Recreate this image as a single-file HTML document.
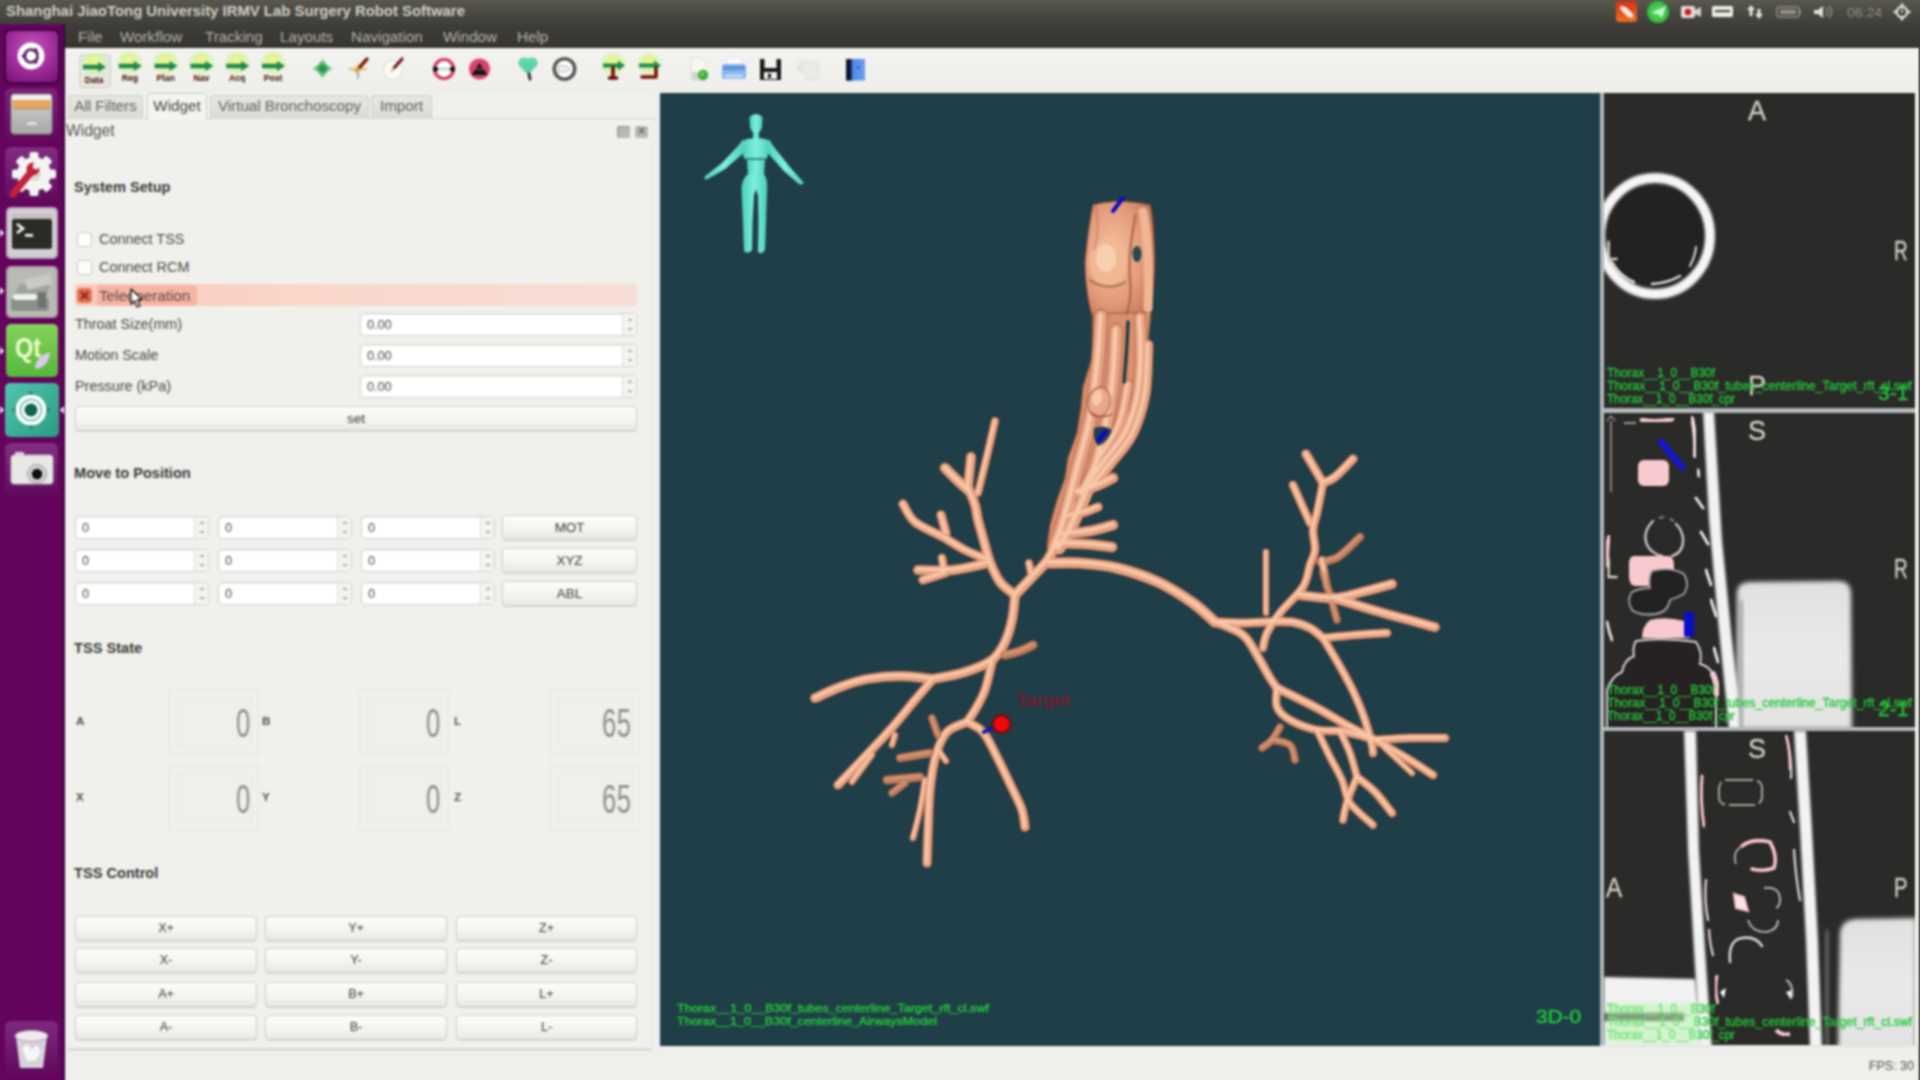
<!DOCTYPE html>
<html lang="en">
<head>
<meta charset="utf-8">
<title>Shanghai JiaoTong University IRMV Lab Surgery Robot Software</title>
<style>
*{box-sizing:border-box;margin:0;padding:0}
html,body{width:1920px;height:1080px;overflow:hidden;background:#f0f0ec}
body{font-family:"Liberation Sans","DejaVu Sans",sans-serif;font-size:14.6px;color:#3c3c3c;position:relative}
#root{position:absolute;left:0;top:0;width:1920px;height:1080px;overflow:visible;background:#f0f0ec;filter:blur(0.8px)}
.abs{position:absolute}
/* ---------- top panel + menu ---------- */
#topbar{position:absolute;left:0;top:0;width:1920px;height:48px;background:linear-gradient(#58584f 0px,#4a4a42 12px,#3d3c38 27px,#36352f 47px,#36352f 48px)}
#title{position:absolute;left:6px;top:3px;font-weight:bold;font-size:14.9px;color:#d2cec4;white-space:nowrap;letter-spacing:0}
.menu{position:absolute;top:28px;font-size:15.2px;color:#b4b1a7;white-space:nowrap}
/* ---------- launcher ---------- */
#launcher{position:absolute;left:0;top:24px;width:65px;height:1056px;background:#64045c;border-right:2px solid #3a0438}
.tile{position:absolute;left:5px;width:53px;height:53px;border-radius:6px;overflow:hidden}
/* ---------- toolbar ---------- */
#toolbar{position:absolute;left:65px;top:48px;width:1855px;height:45px;background:linear-gradient(#f3f3f0,#eeeeea)}
.ico{position:absolute}
/* ---------- left dock ---------- */
#dock{position:absolute;left:65px;top:93px;width:592px;height:987px;background:#f0f0ed}
.tab{position:absolute;top:95px;height:24px;font-size:15.2px;color:#66665f;padding:1px 0 0 0;text-align:center;background:linear-gradient(#e6e6e2,#dcdcd7);border:1px solid #cfcfc9;border-bottom:none;border-radius:4px 4px 0 0;white-space:nowrap}
.tab.sel{background:#f4f4f1;top:93px;height:27px;padding-top:3px;color:#4a4a46}
.h{position:absolute;left:74px;font-weight:bold;font-size:14.6px;color:#3a3a38;white-space:nowrap}
.lbl{position:absolute;font-size:14.4px;color:#4c4c48;white-space:nowrap}
.cb{position:absolute;left:77px;width:15px;height:15px;border:1px solid #c8c8c2;border-radius:3px;background:#fdfdfc}
.spin{position:absolute;height:23px;border:1px solid #d2d2cc;border-radius:4px;background:#fff;font-size:12.6px;color:#4e4e4a;padding:4px 0 0 6px;box-shadow:inset 0 1px 2px rgba(0,0,0,.07)}
.spin i{position:absolute;right:0;top:0;width:14px;height:21px;border-left:1px solid #dcdcd6;background:#f4f4f1;border-radius:0 3px 3px 0}
.spin i:before{content:"";position:absolute;left:4px;top:4px;border:3px solid transparent;border-bottom:3.5px solid #b2b2ac;border-top:none}
.spin i:after{content:"";position:absolute;left:4px;bottom:4px;border:3px solid transparent;border-top:3.5px solid #b2b2ac;border-bottom:none}
.btn{position:absolute;height:25px;border:1px solid #cfcfc9;border-radius:4px;background:linear-gradient(#fdfdfc,#f3f3f0 60%,#e8e8e4);font-size:13.4px;color:#3e3e3a;text-align:center;padding-top:4px;box-shadow:0 1px 1px rgba(0,0,0,.10)}
.lcd{position:absolute;width:90px;height:66px;border:1px solid #e6e6e1;background:#efefec;box-shadow:inset 0 0 0 6px #f0f0ed, inset 0 0 0 7px #e9e9e4}
.lcd span{position:absolute;right:7px;top:15px;font-family:"Liberation Sans","DejaVu Sans",sans-serif;font-size:41px;color:#92928d;letter-spacing:1px;transform:scaleX(.62);transform-origin:right center;line-height:36px;font-weight:normal}
/* ---------- views ---------- */
#v3d{position:absolute;left:660px;top:93px;width:940px;height:953px;background:#203e47;overflow:hidden}
#mprframe{position:absolute;left:1600px;top:93px;width:317px;height:954px;background:#b4b8ba}
.mpr{position:absolute;left:1604px;width:311px;background:#2a2a28;overflow:hidden}
.gtxt{font-family:"Liberation Sans",sans-serif;fill:#22c83a;stroke:#22c83a;stroke-width:.35px}
#status{position:absolute;left:65px;top:1047px;width:1855px;height:33px;background:#efefec}
</style>
</head>
<body>
<div id="root">
<div class="abs" style="left:-12px;top:-12px;width:1944px;height:14px;background:#58584f"></div>
<div class="abs" style="left:-12px;top:0;width:14px;height:26px;background:linear-gradient(#58584f 0px,#4a4a42 12px,#3d3c38 26px)"></div>
<div class="abs" style="left:-12px;top:24px;width:14px;height:1068px;background:#64045c"></div>
<div class="abs" style="left:0;top:1078px;width:65px;height:14px;background:#64045c"></div>
<div class="abs" style="left:65px;top:1078px;width:1867px;height:14px;background:#efefec"></div>
<div class="abs" style="left:1918px;top:48px;width:14px;height:1044px;background:#efefec"></div>
<div class="abs" style="left:1918px;top:-12px;width:14px;height:60px;background:linear-gradient(#58584f 12px,#4a4a42 24px,#3d3c38 39px,#36352f 60px)"></div>

<!-- TOPBAR -->
<div id="topbar">
  <div id="title">Shanghai JiaoTong University IRMV Lab Surgery Robot Software</div>
  <div class="menu" style="left:78px">File</div>
  <div class="menu" style="left:120px">Workflow</div>
  <div class="menu" style="left:205px">Tracking</div>
  <div class="menu" style="left:280px">Layouts</div>
  <div class="menu" style="left:351px">Navigation</div>
  <div class="menu" style="left:443px">Window</div>
  <div class="menu" style="left:517px">Help</div>
  <svg class="abs" style="left:1600px;top:0" width="320" height="24" viewBox="1600 0 320 24">
<defs><linearGradient id="org" x1="0" y1="0" x2="0" y2="1"><stop offset="0" stop-color="#d8301a"/><stop offset="1" stop-color="#f0701e"/></linearGradient>
<radialGradient id="grn"><stop offset="0" stop-color="#5fe068"/><stop offset="1" stop-color="#2fb83c"/></radialGradient></defs>
<rect x="1616" y="1" width="21" height="21" rx="3" fill="url(#org)"/>
<path d="M1620 6 L1626 7 L1633 14 L1633 18 L1628 17 L1621 10 Z" fill="#fbeee6"/>
<circle cx="1658" cy="12" r="11" fill="url(#grn)"/>
<path d="M1651 13 L1666 6 L1662 18 L1658 14 Z" fill="#c8f6c8"/>
<rect x="1681" y="6" width="14" height="12" rx="2" fill="#e6dada"/><path d="M1695 10 L1701 7 V17 L1695 14 Z" fill="#d8d0d0"/><circle cx="1688" cy="12" r="3.200" fill="#c81a24"/>
<rect x="1712" y="6" width="21" height="11" rx="1.500" fill="#eeeeea"/><rect x="1715" y="10" width="15" height="2.200" fill="#4a4a44"/>
<path d="M1751 5 L1755 10 H1752.500 V16 H1749.500 V10 H1747 Z M1759 19 L1755 14 H1757.500 V9 H1760.500 V14 H1763 Z" fill="#e8e6e0"/>
<rect x="1777" y="7" width="22" height="10" rx="2" fill="none" stroke="#8e8c84" stroke-width="1.600"/><rect x="1780" y="9.500" width="16" height="5" fill="#8e8c84"/><rect x="1799" y="10" width="2" height="4" fill="#8e8c84"/>
<path d="M1814 10 H1818 L1823 6 V18 L1818 14 H1814 Z" fill="#e4e2dc"/><path d="M1826 8 Q1829 12 1826 16 M1829 6 Q1834 12 1829 18" stroke="#8e8c84" stroke-width="1.500" fill="none"/>
<text x="1847" y="17" font-family="Liberation Sans, sans-serif" font-size="13.5" fill="#8f8d85" textLength="35" lengthAdjust="spacingAndGlyphs">06:24</text>
<g transform="translate(1902 12)"><circle r="5.200" fill="none" stroke="#e0ded8" stroke-width="2.400"/><g stroke="#e0ded8" stroke-width="2.600"><path d="M0 -8.500 V-5.500 M0 8.500 V5.500 M-8.500 0 H-5.500 M8.500 0 H5.500"/></g><path d="M0 -2.500 V.5" stroke="#e0ded8" stroke-width="1.800"/></g>
</svg>
</div>

<!-- TOOLBAR -->
<div id="toolbar">
<svg class="abs" style="left:0;top:0" width="900" height="45" viewBox="65 48 900 45">
<defs>
<radialGradient id="glow" cx=".5" cy=".38" r=".55"><stop offset="0" stop-color="#f7f48e"/><stop offset=".5" stop-color="#dcf59a" stop-opacity=".95"/><stop offset="1" stop-color="#d0f4b0" stop-opacity="0"/></radialGradient>
<radialGradient id="gstar"><stop offset="0" stop-color="#2f9a4c"/><stop offset=".6" stop-color="#5fc07a"/><stop offset="1" stop-color="#bfe6c4"/></radialGradient>
<radialGradient id="ystar"><stop offset="0" stop-color="#f3d98a"/><stop offset="1" stop-color="#f4ecc8" stop-opacity=".6"/></radialGradient>
<linearGradient id="bookg" x1="0" x2="1"><stop offset="0" stop-color="#3d74d8"/><stop offset="1" stop-color="#6fa0f2"/></linearGradient>
</defs>
<rect x="79.500" y="54.500" width="31" height="33" rx="4" fill="#e6e6e1" stroke="#cfcfc9"/>
<circle cx="94.0" cy="66" r="13.5" fill="url(#glow)"/>
<path d="M83.0 64.8 H98.0 V62 L106.0 67 L98.0 72 V69.2 H83.0 Z" fill="#1f8a4d"/>
<text x="94.0" y="83" text-anchor="middle" font-family="Liberation Sans, sans-serif" font-weight="bold" font-size="8.6" fill="#481000">Data</text>
<circle cx="129.8" cy="65" r="13.5" fill="url(#glow)"/>
<path d="M118.8 63.8 H133.8 V61 L141.8 66 L133.8 71 V68.2 H118.8 Z" fill="#1f8a4d"/>
<text x="129.8" y="81" text-anchor="middle" font-family="Liberation Sans, sans-serif" font-weight="bold" font-size="8.6" fill="#481000">Reg</text>
<circle cx="165.6" cy="65" r="13.5" fill="url(#glow)"/>
<path d="M154.6 63.8 H169.6 V61 L177.6 66 L169.6 71 V68.2 H154.6 Z" fill="#1f8a4d"/>
<text x="165.6" y="81" text-anchor="middle" font-family="Liberation Sans, sans-serif" font-weight="bold" font-size="8.6" fill="#481000">Plan</text>
<circle cx="201.4" cy="65" r="13.5" fill="url(#glow)"/>
<path d="M190.4 63.8 H205.4 V61 L213.4 66 L205.4 71 V68.2 H190.4 Z" fill="#1f8a4d"/>
<text x="201.4" y="81" text-anchor="middle" font-family="Liberation Sans, sans-serif" font-weight="bold" font-size="8.6" fill="#481000">Nav</text>
<circle cx="237.2" cy="65" r="13.5" fill="url(#glow)"/>
<path d="M226.2 63.8 H241.2 V61 L249.2 66 L241.2 71 V68.2 H226.2 Z" fill="#1f8a4d"/>
<text x="237.2" y="81" text-anchor="middle" font-family="Liberation Sans, sans-serif" font-weight="bold" font-size="8.6" fill="#481000">Acq</text>
<circle cx="273.0" cy="65" r="13.5" fill="url(#glow)"/>
<path d="M262.0 63.8 H277.0 V61 L285.0 66 L277.0 71 V68.2 H262.0 Z" fill="#1f8a4d"/>
<text x="273.0" y="81" text-anchor="middle" font-family="Liberation Sans, sans-serif" font-weight="bold" font-size="8.6" fill="#481000">Post</text>
<g transform="translate(322.5 68.500)"><path d="M0 -12 L2.500 -2.500 L12 0 L2.500 2.500 L0 12 L-2.500 2.500 L-12 0 L-2.500 -2.500 Z" fill="#f0cdbd" opacity=".8"/><path d="M0 -10 L4 -4 L10 0 L4 4 L0 10 L-4 4 L-10 0 L-4 -4 Z" fill="url(#gstar)"/><circle r="3.200" fill="#2a8f48"/></g>
<g transform="translate(358 69)"><path d="M0 -11 L2.500 -2.500 L11 0 L2.500 2.500 L0 11 L-2.500 2.500 L-11 0 L-2.500 -2.500 Z" fill="url(#ystar)"/><path d="M0 2 V10" stroke="#a8b0b4" stroke-width="2"/><path d="M-9 0 H9" stroke="#e3c27a" stroke-width="2.200"/><path d="M1 -1 L9 -10" stroke="#7a1f10" stroke-width="3.400" stroke-linecap="round"/><path d="M-3 3 L1 -1" stroke="#d9a050" stroke-width="2.500"/></g>
<g transform="translate(393 70)"><circle r="9.500" fill="#fbfbf8" stroke="#e6e2da" stroke-width="1.500"/><path d="M1 -2 L9 -11" stroke="#6e1a14" stroke-width="3.200" stroke-linecap="round"/><path d="M-2 2 L1 -2" stroke="#e0b0a0" stroke-width="2"/></g>
<g transform="translate(444 69)"><circle r="12.500" fill="#fbe3e8"/><circle r="9.500" fill="#fff" stroke="#cf3c5a" stroke-width="3.200"/><rect x="-6" y="-2" width="12" height="4" fill="#cfe3d6"/><circle cx="-8.500" cy="0" r="2.600" fill="#111"/><circle cx="8.500" cy="0" r="2.600" fill="#111"/></g>
<g transform="translate(479.500 69)"><circle r="12.500" fill="#fbe3e8"/><circle r="10.500" fill="#d0486a"/><path d="M0 -6 L8 6 H-8 Z" fill="#1a1214"/><path d="M-3.500 0 H3.500" stroke="#d0486a" stroke-width="1.300"/></g>
<g transform="translate(528 67)"><path d="M0 2 L2 12" stroke="#3b2a36" stroke-width="3" stroke-linecap="round"/><circle cx="-4" cy="-4" r="5.500" fill="#4fcfa6"/><circle cx="4" cy="-4" r="5.500" fill="#4fcfa6"/><circle cx="0" cy="0" r="5.500" fill="#43c49a"/><circle cx="0" cy="-2" r="8" fill="#8fe6c8" opacity=".35"/></g>
<g transform="translate(564.500 69)"><circle r="10.200" fill="#fff" stroke="#585858" stroke-width="3.600"/><path d="M-6 -3 H2 L6 0 L2 3 H-6 Z" fill="#f0f0f0" stroke="#b8b8b8" stroke-width="1"/></g>
<g transform="translate(613 68)"><circle r="13" cy="-2" fill="url(#glow)"/><path d="M-10 -4.500 H5 V-7.500 L12 -2.500 L5 2.500 V-.5 H-10 Z" fill="#1f8a4d"/><path d="M0 0 V9.500 M-3.500 10 H3.500" stroke="#6e0a0a" stroke-width="3.600" stroke-linecap="round"/></g>
<g transform="translate(649 68)"><circle r="13" cy="-2" fill="url(#glow)"/><path d="M-10 -4.500 H5 V-7.500 L12 -2.500 L5 2.500 V-.5 H-10 Z" fill="#1f8a4d"/><path d="M7 0 V9 H-7" stroke="#7a1208" stroke-width="3.600" stroke-linecap="round" stroke-linejoin="round" fill="none"/></g>
<g><path d="M691 58 H701 L706 63 V80 H691 Z" fill="#f6f6f2" stroke="#deded8"/><rect x="692" y="72" width="7" height="8" fill="#d4d4ce"/><circle cx="703" cy="75" r="5.200" fill="#3fae3a"/><circle cx="702" cy="74" r="2" fill="#72d060"/></g>
<g><rect x="727" y="58" width="14" height="9" fill="#fbfbfb" stroke="#dfe6ee"/><rect x="722" y="64" width="24" height="15" rx="3" fill="#86b6ee"/><rect x="723" y="66" width="22" height="4" fill="#5f94dc"/><rect x="725" y="74" width="18" height="4" rx="1" fill="#b7d4f7"/></g>
<g><path d="M760 59 H781 V80 H760 Z" fill="#181818"/><rect x="764.500" y="58.500" width="12" height="9.500" fill="#f3f3f0"/><rect x="764" y="72" width="13" height="7" fill="#f0f0ee"/><rect x="768" y="73.500" width="3" height="4.500" fill="#181818"/></g>
<g opacity=".55"><path d="M800 61 H812 Q819 61 819 68 V74 Q819 80 812 80 H806 V72 H800 Z" fill="#e6e6e2" stroke="#d2d2cc"/><path d="M795 68 L803 62 V74 Z" fill="#d9d9d4"/></g>
<g><rect x="846" y="59" width="19" height="21.500" fill="url(#bookg)"/><rect x="846" y="59" width="5.500" height="21.500" fill="#0b1636"/><rect x="855" y="62" width="6" height="15" fill="#5c92ee" opacity=".8"/><rect x="857" y="66" width="2.500" height="3" fill="#2d5fc0"/></g>
</svg>
</div>

<!-- LEFT DOCK -->
<div id="dock"></div>
<!--DOCK-CONTENT-START-->
<!-- tabs -->
<div class="abs" style="left:65px;top:118px;width:592px;height:1px;background:#d4d4ce"></div>
<div class="tab" style="left:68px;width:75px">All Filters</div>
<div class="tab sel" style="left:147px;width:60px">Widget</div>
<div class="tab" style="left:210px;width:159px">Virtual Bronchoscopy</div>
<div class="tab" style="left:371px;width:61px">Import</div>
<div class="lbl" style="left:66px;top:122px;font-size:15.6px;color:#5a5a55">Widget</div>
<div class="abs" style="left:617px;top:126px;width:13px;height:12px;background:#b9b9b3;border-radius:2px;box-shadow:inset 2px 2px 0 #a6a6a0"></div>
<div class="abs" style="left:635px;top:126px;width:13px;height:12px;background:#b9b9b3;border-radius:2px;font-size:12px;line-height:11px;color:#6a6a64;text-align:center;font-weight:bold">×</div>
<div class="abs" style="left:652px;top:120px;width:1px;height:927px;background:#e6e6e2"></div>
<div class="abs" style="left:655px;top:93px;width:5px;height:954px;background:#e7f1f4"></div>

<div class="h" style="top:179px">System Setup</div>
<div class="cb" style="top:232px"></div><div class="lbl" style="left:99px;top:231px">Connect TSS</div>
<div class="cb" style="top:260px"></div><div class="lbl" style="left:99px;top:259px">Connect RCM</div>
<div class="abs" style="left:75px;top:284px;width:562px;height:22px;background:linear-gradient(90deg,#f9c9ba,#fad6ca 40%,#f7ded6);border-radius:3px"></div>
<div class="abs" style="left:97px;top:285px;width:100px;height:21px;background:#f6b5a3;border-radius:3px"></div>
<div class="cb" style="top:288px;background:#e8694a;border-color:#d9876f"><svg width="13" height="13" viewBox="0 0 13 13" style="position:absolute;left:0;top:0"><path d="M3 3 L10 10 M10 3 L3 10" stroke="#8a2a1a" stroke-width="2.4" fill="none"/></svg></div>
<div class="lbl" style="left:99px;top:287px;color:#6b4a44;font-size:15.2px">Teleoperation</div>
<svg class="abs" style="left:129px;top:288px" width="16" height="22" viewBox="0 0 16 22"><path d="M2 1 L2 16 L5.5 12.8 L8.2 19 L11 17.8 L8.3 11.8 L13 11.5 Z" fill="#fff" stroke="#111" stroke-width="1.3" stroke-linejoin="round"/></svg>

<div class="lbl" style="left:75px;top:316px">Throat Size(mm)</div><div class="spin" style="left:360px;top:313px;width:277px">0.00<i></i></div>
<div class="lbl" style="left:75px;top:347px">Motion Scale</div><div class="spin" style="left:360px;top:344px;width:277px">0.00<i></i></div>
<div class="lbl" style="left:75px;top:378px">Pressure (kPa)</div><div class="spin" style="left:360px;top:375px;width:277px">0.00<i></i></div>
<div class="btn" style="left:75px;top:406px;width:562px">set</div>

<div class="h" style="top:465px">Move to Position</div>
<div class="spin" style="left:75px;top:516px;width:134px">0<i></i></div><div class="spin" style="left:218px;top:516px;width:134px">0<i></i></div><div class="spin" style="left:361px;top:516px;width:134px">0<i></i></div><div class="btn" style="left:502px;top:515px;width:135px">MOT</div>
<div class="spin" style="left:75px;top:549px;width:134px">0<i></i></div><div class="spin" style="left:218px;top:549px;width:134px">0<i></i></div><div class="spin" style="left:361px;top:549px;width:134px">0<i></i></div><div class="btn" style="left:502px;top:548px;width:135px">XYZ</div>
<div class="spin" style="left:75px;top:582px;width:134px">0<i></i></div><div class="spin" style="left:218px;top:582px;width:134px">0<i></i></div><div class="spin" style="left:361px;top:582px;width:134px">0<i></i></div><div class="btn" style="left:502px;top:581px;width:135px">ABL</div>
<div class="h" style="top:640px">TSS State</div>
<div class="lbl" style="left:76px;top:715px;font-size:11.5px;font-weight:bold;color:#55554f">A</div><div class="lcd" style="left:169px;top:689px"><span>0</span></div><div class="lbl" style="left:262px;top:715px;font-size:11.5px;font-weight:bold;color:#55554f">B</div><div class="lcd" style="left:359px;top:689px"><span>0</span></div><div class="lbl" style="left:454px;top:715px;font-size:11.5px;font-weight:bold;color:#55554f">L</div><div class="lcd" style="left:550px;top:689px"><span>65</span></div>
<div class="lbl" style="left:76px;top:791px;font-size:11.5px;font-weight:bold;color:#55554f">X</div><div class="lcd" style="left:169px;top:765px"><span>0</span></div><div class="lbl" style="left:262px;top:791px;font-size:11.5px;font-weight:bold;color:#55554f">Y</div><div class="lcd" style="left:359px;top:765px"><span>0</span></div><div class="lbl" style="left:454px;top:791px;font-size:11.5px;font-weight:bold;color:#55554f">Z</div><div class="lcd" style="left:550px;top:765px"><span>65</span></div>
<div class="h" style="top:865px">TSS Control</div>
<div class="btn" style="left:75px;top:916px;width:182px;font-size:12.5px">X+</div><div class="btn" style="left:265px;top:916px;width:182px;font-size:12.5px">Y+</div><div class="btn" style="left:456px;top:916px;width:181px;font-size:12.5px">Z+</div>
<div class="btn" style="left:75px;top:948px;width:182px;font-size:12.5px">X-</div><div class="btn" style="left:265px;top:948px;width:182px;font-size:12.5px">Y-</div><div class="btn" style="left:456px;top:948px;width:181px;font-size:12.5px">Z-</div>
<div class="btn" style="left:75px;top:982px;width:182px;font-size:12.5px">A+</div><div class="btn" style="left:265px;top:982px;width:182px;font-size:12.5px">B+</div><div class="btn" style="left:456px;top:982px;width:181px;font-size:12.5px">L+</div>
<div class="btn" style="left:75px;top:1015px;width:182px;font-size:12.5px">A-</div><div class="btn" style="left:265px;top:1015px;width:182px;font-size:12.5px">B-</div><div class="btn" style="left:456px;top:1015px;width:181px;font-size:12.5px">L-</div>
<!--DOCK-CONTENT-END-->

<!-- 3D VIEW -->
<div id="v3d">
<!--V3D-START--><svg class="abs" style="left:0;top:0" width="940" height="953" viewBox="660 93 940 953">
<defs>
<radialGradient id="lx" cx=".4" cy=".45" r=".75"><stop offset="0" stop-color="#f6c39f"/><stop offset=".55" stop-color="#e49b7c"/><stop offset="1" stop-color="#b96a52"/></radialGradient>
<linearGradient id="hum" x1="0" x2="1"><stop offset="0" stop-color="#4ccfbd"/><stop offset=".5" stop-color="#7ef0dc"/><stop offset="1" stop-color="#4ccfbd"/></linearGradient>
</defs>
<path d="M1093 205 Q1118 198 1150 205 Q1154 222 1154.500 263 Q1154 297 1149 315 L1093 318 Q1086 297 1085 263 Q1088 230 1093 205 Z" fill="url(#lx)" stroke="#9a563e" stroke-width="1.200"/>
<path d="M1093 314 L1092 358 L1083 387 L1081 408 L1077 433 L1068 458 L1065 478 L1057 500 L1050 525 L1047 546 L1060 552 L1075 522 L1092 492 L1106 473 L1118 459 L1133 433 L1139 408 L1145 375 L1148 342 L1151 312 Z" fill="#d9906f" stroke="#9a563e" stroke-width="1.200"/>
<ellipse cx="1108" cy="262" rx="19" ry="25" fill="#f2b893" opacity=".9"/>
<ellipse cx="1106" cy="258" rx="10" ry="14" fill="#fad4b4" opacity=".85"/>
<path d="M1143 212 Q1150 250 1148 308" stroke="#f0b592" stroke-width="9" fill="none" stroke-linecap="round"/>
<path d="M1136 214 Q1128 250 1130 280 Q1132 300 1126 315" stroke="#a8644a" stroke-width="2.500" fill="none" opacity=".85"/>
<ellipse cx="1137" cy="254" rx="4.500" ry="8" fill="#264850"/>
<path d="M1089 280 Q1108 292 1126 282" stroke="#a8644a" stroke-width="2.200" fill="none" opacity=".8"/>
<path d="M1096 205 Q1100 235 1094 250" stroke="#c27a5e" stroke-width="2" fill="none" opacity=".6"/>
<path d="M1101 316 C1100.5 323.3 1099.8 342.7 1098 360 C1096.2 377.3 1093.5 401.7 1090 420 C1086.5 438.3 1081.3 453.3 1077 470 C1072.7 486.7 1067.8 507.0 1064 520 C1060.2 533.0 1055.7 543.3 1054 548" stroke="#a96046" stroke-width="13.799999999999999" fill="none" stroke-linecap="round" stroke-linejoin="round"/>
<path d="M1116 330 C1115.5 338.3 1114.8 363.3 1113 380 C1111.2 396.7 1108.7 413.3 1105 430 C1101.3 446.7 1096.5 464.2 1091 480 C1085.5 495.8 1077.3 513.7 1072 525 C1066.7 536.3 1061.2 544.2 1059 548" stroke="#a96046" stroke-width="13.799999999999999" fill="none" stroke-linecap="round" stroke-linejoin="round"/>
<path d="M1140 318 C1140.2 325.0 1141.5 346.3 1141 360 C1140.5 373.7 1139.7 387.7 1137 400 C1134.3 412.3 1130.3 423.8 1125 434 C1119.7 444.2 1111.3 452.3 1105 461 C1098.7 469.7 1090.0 481.8 1087 486" stroke="#a96046" stroke-width="12.4" fill="none" stroke-linecap="round" stroke-linejoin="round"/>
<path d="M1148 345 C1147.5 353.3 1147.7 380.0 1145 395 C1142.3 410.0 1137.7 423.7 1132 435 C1126.3 446.3 1117.8 454.2 1111 463 C1104.2 471.8 1094.3 483.8 1091 488" stroke="#a96046" stroke-width="11.1" fill="none" stroke-linecap="round" stroke-linejoin="round"/>
<path d="M1128 385 C1126.5 391.7 1123.7 412.8 1119 425 C1114.3 437.2 1106.3 446.5 1100 458 C1093.7 469.5 1084.2 488.0 1081 494" stroke="#a96046" stroke-width="11.1" fill="none" stroke-linecap="round" stroke-linejoin="round"/>
<path d="M1077 492 C1080.2 491.0 1090.0 488.3 1096 486 C1102.0 483.7 1110.2 479.3 1113 478" stroke="#a96046" stroke-width="11.1" fill="none" stroke-linecap="round" stroke-linejoin="round"/>
<path d="M1069 516 C1071.7 515.3 1080.2 513.5 1085 512 C1089.8 510.5 1095.8 507.8 1098 507" stroke="#a96046" stroke-width="9.7" fill="none" stroke-linecap="round" stroke-linejoin="round"/>
<path d="M1063 534 C1067.5 533.5 1081.7 532.5 1090 531 C1098.3 529.5 1109.2 526.0 1113 525" stroke="#a96046" stroke-width="11.1" fill="none" stroke-linecap="round" stroke-linejoin="round"/>
<path d="M1058 543 C1062.5 543.2 1076.0 543.3 1085 544 C1094.0 544.7 1107.5 546.5 1112 547" stroke="#a96046" stroke-width="11.1" fill="none" stroke-linecap="round" stroke-linejoin="round"/>
<path d="M1054 548 C1052.8 550.2 1050.5 556.3 1047 561 C1043.5 565.7 1038.3 570.3 1033 576 C1027.7 581.7 1018.0 591.8 1015 595" stroke="#a96046" stroke-width="11.1" fill="none" stroke-linecap="round" stroke-linejoin="round"/>
<path d="M1029 563 L1031 573" stroke="#a96046" stroke-width="8.4" fill="none" stroke-linecap="round" stroke-linejoin="round"/>
<path d="M1050 563 C1055.0 563.0 1068.8 562.2 1080 563 C1091.2 563.8 1104.0 564.8 1117 568 C1130.0 571.2 1145.3 576.2 1158 582 C1170.7 587.8 1183.5 596.3 1193 603 C1202.5 609.7 1211.3 618.8 1215 622" stroke="#a96046" stroke-width="11.7" fill="none" stroke-linecap="round" stroke-linejoin="round"/>
<path d="M995 421 C993.7 426.8 989.8 444.0 987 456 C984.2 468.0 979.5 486.8 978 493" stroke="#a96046" stroke-width="8.4" fill="none" stroke-linecap="round" stroke-linejoin="round"/>
<path d="M971 457 L968 487" stroke="#a96046" stroke-width="10.4" fill="none" stroke-linecap="round" stroke-linejoin="round"/>
<path d="M945 468 C947.0 470.0 953.2 476.3 957 480 C960.8 483.7 966.2 488.3 968 490" stroke="#a96046" stroke-width="11.1" fill="none" stroke-linecap="round" stroke-linejoin="round"/>
<path d="M968 487 C969.2 490.0 973.3 499.5 975 505 C976.7 510.5 976.3 513.3 978 520 C979.7 526.7 983.0 538.0 985 545 C987.0 552.0 987.5 555.8 990 562 C992.5 568.2 995.8 576.5 1000 582 C1004.2 587.5 1012.5 592.8 1015 595" stroke="#a96046" stroke-width="10.4" fill="none" stroke-linecap="round" stroke-linejoin="round"/>
<path d="M903 504 C905.0 507.0 908.3 516.5 915 522 C921.7 527.5 934.7 532.3 943 537 C951.3 541.7 957.8 546.3 965 550 C972.2 553.7 982.5 557.5 986 559" stroke="#a96046" stroke-width="9.7" fill="none" stroke-linecap="round" stroke-linejoin="round"/>
<path d="M941 515 L946 533" stroke="#a96046" stroke-width="9.7" fill="none" stroke-linecap="round" stroke-linejoin="round"/>
<path d="M918 570 C923.8 570.0 941.3 571.2 953 570 C964.7 568.8 982.2 564.2 988 563" stroke="#a96046" stroke-width="10.4" fill="none" stroke-linecap="round" stroke-linejoin="round"/>
<path d="M923 580 L945 573" stroke="#a96046" stroke-width="9.7" fill="none" stroke-linecap="round" stroke-linejoin="round"/>
<path d="M942 558 L944 570" stroke="#a96046" stroke-width="9.0" fill="none" stroke-linecap="round" stroke-linejoin="round"/>
<path d="M1015 595 C1014.5 599.2 1013.7 612.2 1012 620 C1010.3 627.8 1008.3 635.3 1005 642 C1001.7 648.7 998.7 655.0 992 660 C985.3 665.0 974.8 668.8 965 672 C955.2 675.2 938.3 677.8 933 679" stroke="#a96046" stroke-width="10.4" fill="none" stroke-linecap="round" stroke-linejoin="round"/>
<path d="M933 679 C927.5 678.5 911.0 676.0 900 676 C889.0 676.0 877.0 677.2 867 679 C857.0 680.8 848.7 683.8 840 687 C831.3 690.2 819.2 696.2 815 698" stroke="#a96046" stroke-width="10.4" fill="none" stroke-linecap="round" stroke-linejoin="round"/>
<path d="M1005 655 C1007.5 654.3 1015.3 652.7 1020 651 C1024.7 649.3 1030.8 646.0 1033 645" stroke="#7d4a36" stroke-width="9.7" fill="none" stroke-linecap="round" stroke-linejoin="round"/>
<path d="M933 679 C930.0 682.5 922.2 691.5 915 700 C907.8 708.5 899.2 719.7 890 730 C880.8 740.3 868.7 752.8 860 762 C851.3 771.2 841.7 781.2 838 785" stroke="#a96046" stroke-width="9.7" fill="none" stroke-linecap="round" stroke-linejoin="round"/>
<path d="M872 755 L852 782" stroke="#a96046" stroke-width="7.0" fill="none" stroke-linecap="round" stroke-linejoin="round"/>
<path d="M895 735 L892 745" stroke="#a96046" stroke-width="7.0" fill="none" stroke-linecap="round" stroke-linejoin="round"/>
<path d="M992 662 C990.8 666.7 987.8 682.0 985 690 C982.2 698.0 978.0 704.7 975 710 C972.0 715.3 968.3 720.0 967 722" stroke="#a96046" stroke-width="9.7" fill="none" stroke-linecap="round" stroke-linejoin="round"/>
<path d="M967 722 C963.7 723.7 952.2 726.5 947 732 C941.8 737.5 938.8 745.3 936 755 C933.2 764.7 931.3 777.2 930 790 C928.7 802.8 928.5 819.8 928 832 C927.5 844.2 927.2 857.8 927 863" stroke="#a96046" stroke-width="9.7" fill="none" stroke-linecap="round" stroke-linejoin="round"/>
<path d="M925 780 C924.2 785.0 922.0 800.3 920 810 C918.0 819.7 914.2 833.3 913 838" stroke="#a96046" stroke-width="7.0" fill="none" stroke-linecap="round" stroke-linejoin="round"/>
<path d="M967 722 C969.7 723.7 978.0 726.2 983 732 C988.0 737.8 992.0 747.3 997 757 C1002.0 766.7 1008.8 781.2 1013 790 C1017.2 798.8 1020.0 803.8 1022 810 C1024.0 816.2 1024.5 824.2 1025 827" stroke="#a96046" stroke-width="9.7" fill="none" stroke-linecap="round" stroke-linejoin="round"/>
<path d="M932 718 L938 735" stroke="#7d4a36" stroke-width="8.4" fill="none" stroke-linecap="round" stroke-linejoin="round"/>
<path d="M900 758 L930 753" stroke="#7d4a36" stroke-width="9.0" fill="none" stroke-linecap="round" stroke-linejoin="round"/>
<path d="M887 780 L920 777" stroke="#7d4a36" stroke-width="9.7" fill="none" stroke-linecap="round" stroke-linejoin="round"/>
<path d="M892 793 L905 783" stroke="#7d4a36" stroke-width="8.4" fill="none" stroke-linecap="round" stroke-linejoin="round"/>
<path d="M946 761 L939 751" stroke="#a96046" stroke-width="7.0" fill="none" stroke-linecap="round" stroke-linejoin="round"/>
<path d="M1215 622 C1219.2 622.2 1231.3 623.0 1240 623 C1248.7 623.0 1258.3 622.2 1267 622 C1275.7 621.8 1284.8 621.0 1292 622 C1299.2 623.0 1304.8 625.3 1310 628 C1315.2 630.7 1320.8 636.3 1323 638" stroke="#a96046" stroke-width="9.7" fill="none" stroke-linecap="round" stroke-linejoin="round"/>
<path d="M1323 638 C1328.3 637.5 1344.3 635.8 1355 635 C1365.7 634.2 1381.7 633.3 1387 633" stroke="#a96046" stroke-width="9.0" fill="none" stroke-linecap="round" stroke-linejoin="round"/>
<path d="M1323 638 C1326.2 643.3 1336.7 660.5 1342 670 C1347.3 679.5 1351.2 686.7 1355 695 C1358.8 703.3 1362.2 711.7 1365 720 C1367.8 728.3 1370.7 739.5 1372 745 C1373.3 750.5 1372.8 751.7 1373 753" stroke="#a96046" stroke-width="9.0" fill="none" stroke-linecap="round" stroke-linejoin="round"/>
<path d="M1215 622 C1219.7 624.2 1235.8 629.2 1243 635 C1250.2 640.8 1253.5 649.8 1258 657 C1262.5 664.2 1266.8 672.8 1270 678 C1273.2 683.2 1275.8 686.3 1277 688" stroke="#a96046" stroke-width="9.7" fill="none" stroke-linecap="round" stroke-linejoin="round"/>
<path d="M1277 688 C1283.7 691.3 1304.8 701.5 1317 708 C1329.2 714.5 1340.3 721.7 1350 727 C1359.7 732.3 1370.8 737.8 1375 740" stroke="#a96046" stroke-width="9.7" fill="none" stroke-linecap="round" stroke-linejoin="round"/>
<path d="M1375 740 C1380.8 739.7 1398.3 738.3 1410 738 C1421.7 737.7 1439.2 738.0 1445 738" stroke="#a96046" stroke-width="9.0" fill="none" stroke-linecap="round" stroke-linejoin="round"/>
<path d="M1375 740 C1380.0 742.8 1395.3 751.2 1405 757 C1414.7 762.8 1428.3 772.0 1433 775" stroke="#a96046" stroke-width="9.0" fill="none" stroke-linecap="round" stroke-linejoin="round"/>
<path d="M1385 748 L1412 773" stroke="#a96046" stroke-width="7.0" fill="none" stroke-linecap="round" stroke-linejoin="round"/>
<path d="M1277 688 C1277.0 691.2 1274.8 701.7 1277 707 C1279.2 712.3 1283.3 716.2 1290 720 C1296.7 723.8 1308.7 728.2 1317 730 C1325.3 731.8 1333.2 730.2 1340 731 C1346.8 731.8 1352.2 733.5 1358 735 C1363.8 736.5 1372.2 739.2 1375 740" stroke="#a96046" stroke-width="9.0" fill="none" stroke-linecap="round" stroke-linejoin="round"/>
<path d="M1317 730 C1319.2 734.5 1325.8 748.7 1330 757 C1334.2 765.3 1338.7 772.3 1342 780 C1345.3 787.7 1344.8 795.5 1350 803 C1355.2 810.5 1369.2 821.3 1373 825" stroke="#a96046" stroke-width="8.4" fill="none" stroke-linecap="round" stroke-linejoin="round"/>
<path d="M1340 731 C1341.7 734.7 1347.2 745.3 1350 753 C1352.8 760.7 1355.8 773.0 1357 777" stroke="#a96046" stroke-width="8.4" fill="none" stroke-linecap="round" stroke-linejoin="round"/>
<path d="M1357 777 C1360.0 779.5 1369.2 786.0 1375 792 C1380.8 798.0 1389.2 809.5 1392 813" stroke="#a96046" stroke-width="9.0" fill="none" stroke-linecap="round" stroke-linejoin="round"/>
<path d="M1357 777 C1355.3 781.2 1349.3 794.8 1347 802 C1344.7 809.2 1343.7 817.0 1343 820" stroke="#a96046" stroke-width="8.4" fill="none" stroke-linecap="round" stroke-linejoin="round"/>
<path d="M1280 727 C1278.7 729.2 1275.0 736.5 1272 740 C1269.0 743.5 1263.7 746.7 1262 748" stroke="#7d4a36" stroke-width="8.4" fill="none" stroke-linecap="round" stroke-linejoin="round"/>
<path d="M1272 740 C1275.0 740.8 1286.2 741.7 1290 745 C1293.8 748.3 1294.2 757.5 1295 760" stroke="#7d4a36" stroke-width="8.4" fill="none" stroke-linecap="round" stroke-linejoin="round"/>
<path d="M1266 552 L1266 613" stroke="#a96046" stroke-width="7.0" fill="none" stroke-linecap="round" stroke-linejoin="round"/>
<path d="M1323 483 C1322.0 488.0 1318.7 505.2 1317 513 C1315.3 520.8 1313.3 523.8 1313 530 C1312.7 536.2 1315.5 544.2 1315 550 C1314.5 555.8 1312.0 558.8 1310 565 C1308.0 571.2 1308.0 579.0 1303 587 C1298.0 595.0 1286.0 605.3 1280 613 C1274.0 620.7 1269.8 627.2 1267 633 C1264.2 638.8 1263.7 645.5 1263 648" stroke="#a96046" stroke-width="9.0" fill="none" stroke-linecap="round" stroke-linejoin="round"/>
<path d="M1306 454 L1323 483" stroke="#a96046" stroke-width="9.7" fill="none" stroke-linecap="round" stroke-linejoin="round"/>
<path d="M1353 459 C1350.0 462.0 1340.0 473.0 1335 477 C1330.0 481.0 1325.0 482.0 1323 483" stroke="#a96046" stroke-width="9.7" fill="none" stroke-linecap="round" stroke-linejoin="round"/>
<path d="M1293 485 L1310 523" stroke="#a96046" stroke-width="9.0" fill="none" stroke-linecap="round" stroke-linejoin="round"/>
<path d="M1360 537 C1356.3 540.3 1344.7 552.8 1338 557 C1331.3 561.2 1323.0 561.2 1320 562" stroke="#7d4a36" stroke-width="9.0" fill="none" stroke-linecap="round" stroke-linejoin="round"/>
<path d="M1322 560 L1327 587" stroke="#a96046" stroke-width="8.4" fill="none" stroke-linecap="round" stroke-linejoin="round"/>
<path d="M1323 573 C1324.2 576.7 1327.7 587.2 1330 595 C1332.3 602.8 1335.8 615.8 1337 620" stroke="#7d4a36" stroke-width="8.4" fill="none" stroke-linecap="round" stroke-linejoin="round"/>
<path d="M1299 595 C1304.8 595.5 1323.5 598.5 1334 598 C1344.5 597.5 1352.3 594.3 1362 592 C1371.7 589.7 1387.0 585.3 1392 584" stroke="#a96046" stroke-width="10.4" fill="none" stroke-linecap="round" stroke-linejoin="round"/>
<path d="M1334 598 C1341.7 600.3 1363.2 607.2 1380 612 C1396.8 616.8 1425.8 624.5 1435 627" stroke="#a96046" stroke-width="10.4" fill="none" stroke-linecap="round" stroke-linejoin="round"/>
<path d="M1101 316 C1100.5 323.3 1099.8 342.7 1098 360 C1096.2 377.3 1093.5 401.7 1090 420 C1086.5 438.3 1081.3 453.3 1077 470 C1072.7 486.7 1067.8 507.0 1064 520 C1060.2 533.0 1055.7 543.3 1054 548" stroke="#e6a283" stroke-width="12.2" fill="none" stroke-linecap="round" stroke-linejoin="round"/>
<path d="M1116 330 C1115.5 338.3 1114.8 363.3 1113 380 C1111.2 396.7 1108.7 413.3 1105 430 C1101.3 446.7 1096.5 464.2 1091 480 C1085.5 495.8 1077.3 513.7 1072 525 C1066.7 536.3 1061.2 544.2 1059 548" stroke="#e6a283" stroke-width="12.2" fill="none" stroke-linecap="round" stroke-linejoin="round"/>
<path d="M1140 318 C1140.2 325.0 1141.5 346.3 1141 360 C1140.5 373.7 1139.7 387.7 1137 400 C1134.3 412.3 1130.3 423.8 1125 434 C1119.7 444.2 1111.3 452.3 1105 461 C1098.7 469.7 1090.0 481.8 1087 486" stroke="#e6a283" stroke-width="10.8" fill="none" stroke-linecap="round" stroke-linejoin="round"/>
<path d="M1148 345 C1147.5 353.3 1147.7 380.0 1145 395 C1142.3 410.0 1137.7 423.7 1132 435 C1126.3 446.3 1117.8 454.2 1111 463 C1104.2 471.8 1094.3 483.8 1091 488" stroke="#e6a283" stroke-width="9.5" fill="none" stroke-linecap="round" stroke-linejoin="round"/>
<path d="M1128 385 C1126.5 391.7 1123.7 412.8 1119 425 C1114.3 437.2 1106.3 446.5 1100 458 C1093.7 469.5 1084.2 488.0 1081 494" stroke="#e6a283" stroke-width="9.5" fill="none" stroke-linecap="round" stroke-linejoin="round"/>
<path d="M1077 492 C1080.2 491.0 1090.0 488.3 1096 486 C1102.0 483.7 1110.2 479.3 1113 478" stroke="#e6a283" stroke-width="9.5" fill="none" stroke-linecap="round" stroke-linejoin="round"/>
<path d="M1069 516 C1071.7 515.3 1080.2 513.5 1085 512 C1089.8 510.5 1095.8 507.8 1098 507" stroke="#e6a283" stroke-width="8.1" fill="none" stroke-linecap="round" stroke-linejoin="round"/>
<path d="M1063 534 C1067.5 533.5 1081.7 532.5 1090 531 C1098.3 529.5 1109.2 526.0 1113 525" stroke="#e6a283" stroke-width="9.5" fill="none" stroke-linecap="round" stroke-linejoin="round"/>
<path d="M1058 543 C1062.5 543.2 1076.0 543.3 1085 544 C1094.0 544.7 1107.5 546.5 1112 547" stroke="#e6a283" stroke-width="9.5" fill="none" stroke-linecap="round" stroke-linejoin="round"/>
<path d="M1054 548 C1052.8 550.2 1050.5 556.3 1047 561 C1043.5 565.7 1038.3 570.3 1033 576 C1027.7 581.7 1018.0 591.8 1015 595" stroke="#e6a283" stroke-width="9.5" fill="none" stroke-linecap="round" stroke-linejoin="round"/>
<path d="M1029 563 L1031 573" stroke="#e6a283" stroke-width="6.8" fill="none" stroke-linecap="round" stroke-linejoin="round"/>
<path d="M1050 563 C1055.0 563.0 1068.8 562.2 1080 563 C1091.2 563.8 1104.0 564.8 1117 568 C1130.0 571.2 1145.3 576.2 1158 582 C1170.7 587.8 1183.5 596.3 1193 603 C1202.5 609.7 1211.3 618.8 1215 622" stroke="#e6a283" stroke-width="10.1" fill="none" stroke-linecap="round" stroke-linejoin="round"/>
<path d="M995 421 C993.7 426.8 989.8 444.0 987 456 C984.2 468.0 979.5 486.8 978 493" stroke="#e6a283" stroke-width="6.8" fill="none" stroke-linecap="round" stroke-linejoin="round"/>
<path d="M971 457 L968 487" stroke="#e6a283" stroke-width="8.8" fill="none" stroke-linecap="round" stroke-linejoin="round"/>
<path d="M945 468 C947.0 470.0 953.2 476.3 957 480 C960.8 483.7 966.2 488.3 968 490" stroke="#e6a283" stroke-width="9.5" fill="none" stroke-linecap="round" stroke-linejoin="round"/>
<path d="M968 487 C969.2 490.0 973.3 499.5 975 505 C976.7 510.5 976.3 513.3 978 520 C979.7 526.7 983.0 538.0 985 545 C987.0 552.0 987.5 555.8 990 562 C992.5 568.2 995.8 576.5 1000 582 C1004.2 587.5 1012.5 592.8 1015 595" stroke="#e6a283" stroke-width="8.8" fill="none" stroke-linecap="round" stroke-linejoin="round"/>
<path d="M903 504 C905.0 507.0 908.3 516.5 915 522 C921.7 527.5 934.7 532.3 943 537 C951.3 541.7 957.8 546.3 965 550 C972.2 553.7 982.5 557.5 986 559" stroke="#e6a283" stroke-width="8.1" fill="none" stroke-linecap="round" stroke-linejoin="round"/>
<path d="M941 515 L946 533" stroke="#e6a283" stroke-width="8.1" fill="none" stroke-linecap="round" stroke-linejoin="round"/>
<path d="M918 570 C923.8 570.0 941.3 571.2 953 570 C964.7 568.8 982.2 564.2 988 563" stroke="#e6a283" stroke-width="8.8" fill="none" stroke-linecap="round" stroke-linejoin="round"/>
<path d="M923 580 L945 573" stroke="#e6a283" stroke-width="8.1" fill="none" stroke-linecap="round" stroke-linejoin="round"/>
<path d="M942 558 L944 570" stroke="#e6a283" stroke-width="7.4" fill="none" stroke-linecap="round" stroke-linejoin="round"/>
<path d="M1015 595 C1014.5 599.2 1013.7 612.2 1012 620 C1010.3 627.8 1008.3 635.3 1005 642 C1001.7 648.7 998.7 655.0 992 660 C985.3 665.0 974.8 668.8 965 672 C955.2 675.2 938.3 677.8 933 679" stroke="#e6a283" stroke-width="8.8" fill="none" stroke-linecap="round" stroke-linejoin="round"/>
<path d="M933 679 C927.5 678.5 911.0 676.0 900 676 C889.0 676.0 877.0 677.2 867 679 C857.0 680.8 848.7 683.8 840 687 C831.3 690.2 819.2 696.2 815 698" stroke="#e6a283" stroke-width="8.8" fill="none" stroke-linecap="round" stroke-linejoin="round"/>
<path d="M1005 655 C1007.5 654.3 1015.3 652.7 1020 651 C1024.7 649.3 1030.8 646.0 1033 645" stroke="#bd7c5e" stroke-width="8.1" fill="none" stroke-linecap="round" stroke-linejoin="round"/>
<path d="M933 679 C930.0 682.5 922.2 691.5 915 700 C907.8 708.5 899.2 719.7 890 730 C880.8 740.3 868.7 752.8 860 762 C851.3 771.2 841.7 781.2 838 785" stroke="#e6a283" stroke-width="8.1" fill="none" stroke-linecap="round" stroke-linejoin="round"/>
<path d="M872 755 L852 782" stroke="#e6a283" stroke-width="5.4" fill="none" stroke-linecap="round" stroke-linejoin="round"/>
<path d="M895 735 L892 745" stroke="#e6a283" stroke-width="5.4" fill="none" stroke-linecap="round" stroke-linejoin="round"/>
<path d="M992 662 C990.8 666.7 987.8 682.0 985 690 C982.2 698.0 978.0 704.7 975 710 C972.0 715.3 968.3 720.0 967 722" stroke="#e6a283" stroke-width="8.1" fill="none" stroke-linecap="round" stroke-linejoin="round"/>
<path d="M967 722 C963.7 723.7 952.2 726.5 947 732 C941.8 737.5 938.8 745.3 936 755 C933.2 764.7 931.3 777.2 930 790 C928.7 802.8 928.5 819.8 928 832 C927.5 844.2 927.2 857.8 927 863" stroke="#e6a283" stroke-width="8.1" fill="none" stroke-linecap="round" stroke-linejoin="round"/>
<path d="M925 780 C924.2 785.0 922.0 800.3 920 810 C918.0 819.7 914.2 833.3 913 838" stroke="#e6a283" stroke-width="5.4" fill="none" stroke-linecap="round" stroke-linejoin="round"/>
<path d="M967 722 C969.7 723.7 978.0 726.2 983 732 C988.0 737.8 992.0 747.3 997 757 C1002.0 766.7 1008.8 781.2 1013 790 C1017.2 798.8 1020.0 803.8 1022 810 C1024.0 816.2 1024.5 824.2 1025 827" stroke="#e6a283" stroke-width="8.1" fill="none" stroke-linecap="round" stroke-linejoin="round"/>
<path d="M932 718 L938 735" stroke="#bd7c5e" stroke-width="6.8" fill="none" stroke-linecap="round" stroke-linejoin="round"/>
<path d="M900 758 L930 753" stroke="#bd7c5e" stroke-width="7.4" fill="none" stroke-linecap="round" stroke-linejoin="round"/>
<path d="M887 780 L920 777" stroke="#bd7c5e" stroke-width="8.1" fill="none" stroke-linecap="round" stroke-linejoin="round"/>
<path d="M892 793 L905 783" stroke="#bd7c5e" stroke-width="6.8" fill="none" stroke-linecap="round" stroke-linejoin="round"/>
<path d="M946 761 L939 751" stroke="#e6a283" stroke-width="5.4" fill="none" stroke-linecap="round" stroke-linejoin="round"/>
<path d="M1215 622 C1219.2 622.2 1231.3 623.0 1240 623 C1248.7 623.0 1258.3 622.2 1267 622 C1275.7 621.8 1284.8 621.0 1292 622 C1299.2 623.0 1304.8 625.3 1310 628 C1315.2 630.7 1320.8 636.3 1323 638" stroke="#e6a283" stroke-width="8.1" fill="none" stroke-linecap="round" stroke-linejoin="round"/>
<path d="M1323 638 C1328.3 637.5 1344.3 635.8 1355 635 C1365.7 634.2 1381.7 633.3 1387 633" stroke="#e6a283" stroke-width="7.4" fill="none" stroke-linecap="round" stroke-linejoin="round"/>
<path d="M1323 638 C1326.2 643.3 1336.7 660.5 1342 670 C1347.3 679.5 1351.2 686.7 1355 695 C1358.8 703.3 1362.2 711.7 1365 720 C1367.8 728.3 1370.7 739.5 1372 745 C1373.3 750.5 1372.8 751.7 1373 753" stroke="#e6a283" stroke-width="7.4" fill="none" stroke-linecap="round" stroke-linejoin="round"/>
<path d="M1215 622 C1219.7 624.2 1235.8 629.2 1243 635 C1250.2 640.8 1253.5 649.8 1258 657 C1262.5 664.2 1266.8 672.8 1270 678 C1273.2 683.2 1275.8 686.3 1277 688" stroke="#e6a283" stroke-width="8.1" fill="none" stroke-linecap="round" stroke-linejoin="round"/>
<path d="M1277 688 C1283.7 691.3 1304.8 701.5 1317 708 C1329.2 714.5 1340.3 721.7 1350 727 C1359.7 732.3 1370.8 737.8 1375 740" stroke="#e6a283" stroke-width="8.1" fill="none" stroke-linecap="round" stroke-linejoin="round"/>
<path d="M1375 740 C1380.8 739.7 1398.3 738.3 1410 738 C1421.7 737.7 1439.2 738.0 1445 738" stroke="#e6a283" stroke-width="7.4" fill="none" stroke-linecap="round" stroke-linejoin="round"/>
<path d="M1375 740 C1380.0 742.8 1395.3 751.2 1405 757 C1414.7 762.8 1428.3 772.0 1433 775" stroke="#e6a283" stroke-width="7.4" fill="none" stroke-linecap="round" stroke-linejoin="round"/>
<path d="M1385 748 L1412 773" stroke="#e6a283" stroke-width="5.4" fill="none" stroke-linecap="round" stroke-linejoin="round"/>
<path d="M1277 688 C1277.0 691.2 1274.8 701.7 1277 707 C1279.2 712.3 1283.3 716.2 1290 720 C1296.7 723.8 1308.7 728.2 1317 730 C1325.3 731.8 1333.2 730.2 1340 731 C1346.8 731.8 1352.2 733.5 1358 735 C1363.8 736.5 1372.2 739.2 1375 740" stroke="#e6a283" stroke-width="7.4" fill="none" stroke-linecap="round" stroke-linejoin="round"/>
<path d="M1317 730 C1319.2 734.5 1325.8 748.7 1330 757 C1334.2 765.3 1338.7 772.3 1342 780 C1345.3 787.7 1344.8 795.5 1350 803 C1355.2 810.5 1369.2 821.3 1373 825" stroke="#e6a283" stroke-width="6.8" fill="none" stroke-linecap="round" stroke-linejoin="round"/>
<path d="M1340 731 C1341.7 734.7 1347.2 745.3 1350 753 C1352.8 760.7 1355.8 773.0 1357 777" stroke="#e6a283" stroke-width="6.8" fill="none" stroke-linecap="round" stroke-linejoin="round"/>
<path d="M1357 777 C1360.0 779.5 1369.2 786.0 1375 792 C1380.8 798.0 1389.2 809.5 1392 813" stroke="#e6a283" stroke-width="7.4" fill="none" stroke-linecap="round" stroke-linejoin="round"/>
<path d="M1357 777 C1355.3 781.2 1349.3 794.8 1347 802 C1344.7 809.2 1343.7 817.0 1343 820" stroke="#e6a283" stroke-width="6.8" fill="none" stroke-linecap="round" stroke-linejoin="round"/>
<path d="M1280 727 C1278.7 729.2 1275.0 736.5 1272 740 C1269.0 743.5 1263.7 746.7 1262 748" stroke="#bd7c5e" stroke-width="6.8" fill="none" stroke-linecap="round" stroke-linejoin="round"/>
<path d="M1272 740 C1275.0 740.8 1286.2 741.7 1290 745 C1293.8 748.3 1294.2 757.5 1295 760" stroke="#bd7c5e" stroke-width="6.8" fill="none" stroke-linecap="round" stroke-linejoin="round"/>
<path d="M1266 552 L1266 613" stroke="#e6a283" stroke-width="5.4" fill="none" stroke-linecap="round" stroke-linejoin="round"/>
<path d="M1323 483 C1322.0 488.0 1318.7 505.2 1317 513 C1315.3 520.8 1313.3 523.8 1313 530 C1312.7 536.2 1315.5 544.2 1315 550 C1314.5 555.8 1312.0 558.8 1310 565 C1308.0 571.2 1308.0 579.0 1303 587 C1298.0 595.0 1286.0 605.3 1280 613 C1274.0 620.7 1269.8 627.2 1267 633 C1264.2 638.8 1263.7 645.5 1263 648" stroke="#e6a283" stroke-width="7.4" fill="none" stroke-linecap="round" stroke-linejoin="round"/>
<path d="M1306 454 L1323 483" stroke="#e6a283" stroke-width="8.1" fill="none" stroke-linecap="round" stroke-linejoin="round"/>
<path d="M1353 459 C1350.0 462.0 1340.0 473.0 1335 477 C1330.0 481.0 1325.0 482.0 1323 483" stroke="#e6a283" stroke-width="8.1" fill="none" stroke-linecap="round" stroke-linejoin="round"/>
<path d="M1293 485 L1310 523" stroke="#e6a283" stroke-width="7.4" fill="none" stroke-linecap="round" stroke-linejoin="round"/>
<path d="M1360 537 C1356.3 540.3 1344.7 552.8 1338 557 C1331.3 561.2 1323.0 561.2 1320 562" stroke="#bd7c5e" stroke-width="7.4" fill="none" stroke-linecap="round" stroke-linejoin="round"/>
<path d="M1322 560 L1327 587" stroke="#e6a283" stroke-width="6.8" fill="none" stroke-linecap="round" stroke-linejoin="round"/>
<path d="M1323 573 C1324.2 576.7 1327.7 587.2 1330 595 C1332.3 602.8 1335.8 615.8 1337 620" stroke="#bd7c5e" stroke-width="6.8" fill="none" stroke-linecap="round" stroke-linejoin="round"/>
<path d="M1299 595 C1304.8 595.5 1323.5 598.5 1334 598 C1344.5 597.5 1352.3 594.3 1362 592 C1371.7 589.7 1387.0 585.3 1392 584" stroke="#e6a283" stroke-width="8.8" fill="none" stroke-linecap="round" stroke-linejoin="round"/>
<path d="M1334 598 C1341.7 600.3 1363.2 607.2 1380 612 C1396.8 616.8 1425.8 624.5 1435 627" stroke="#e6a283" stroke-width="8.8" fill="none" stroke-linecap="round" stroke-linejoin="round"/>
<path d="M1101 316 C1100.5 323.3 1099.8 342.7 1098 360 C1096.2 377.3 1093.5 401.7 1090 420 C1086.5 438.3 1081.3 453.3 1077 470 C1072.7 486.7 1067.8 507.0 1064 520 C1060.2 533.0 1055.7 543.3 1054 548" stroke="#f7c9a9" stroke-width="4.6" fill="none" stroke-linecap="round" stroke-linejoin="round" transform="translate(-0.6 -0.8)"/>
<path d="M1116 330 C1115.5 338.3 1114.8 363.3 1113 380 C1111.2 396.7 1108.7 413.3 1105 430 C1101.3 446.7 1096.5 464.2 1091 480 C1085.5 495.8 1077.3 513.7 1072 525 C1066.7 536.3 1061.2 544.2 1059 548" stroke="#f7c9a9" stroke-width="4.6" fill="none" stroke-linecap="round" stroke-linejoin="round" transform="translate(-0.6 -0.8)"/>
<path d="M1140 318 C1140.2 325.0 1141.5 346.3 1141 360 C1140.5 373.7 1139.7 387.7 1137 400 C1134.3 412.3 1130.3 423.8 1125 434 C1119.7 444.2 1111.3 452.3 1105 461 C1098.7 469.7 1090.0 481.8 1087 486" stroke="#f7c9a9" stroke-width="4.1" fill="none" stroke-linecap="round" stroke-linejoin="round" transform="translate(-0.6 -0.8)"/>
<path d="M1148 345 C1147.5 353.3 1147.7 380.0 1145 395 C1142.3 410.0 1137.7 423.7 1132 435 C1126.3 446.3 1117.8 454.2 1111 463 C1104.2 471.8 1094.3 483.8 1091 488" stroke="#f7c9a9" stroke-width="3.6" fill="none" stroke-linecap="round" stroke-linejoin="round" transform="translate(-0.6 -0.8)"/>
<path d="M1128 385 C1126.5 391.7 1123.7 412.8 1119 425 C1114.3 437.2 1106.3 446.5 1100 458 C1093.7 469.5 1084.2 488.0 1081 494" stroke="#f7c9a9" stroke-width="3.6" fill="none" stroke-linecap="round" stroke-linejoin="round" transform="translate(-0.6 -0.8)"/>
<path d="M1077 492 C1080.2 491.0 1090.0 488.3 1096 486 C1102.0 483.7 1110.2 479.3 1113 478" stroke="#f7c9a9" stroke-width="3.6" fill="none" stroke-linecap="round" stroke-linejoin="round" transform="translate(-0.6 -0.8)"/>
<path d="M1069 516 C1071.7 515.3 1080.2 513.5 1085 512 C1089.8 510.5 1095.8 507.8 1098 507" stroke="#f7c9a9" stroke-width="3.1" fill="none" stroke-linecap="round" stroke-linejoin="round" transform="translate(-0.6 -0.8)"/>
<path d="M1063 534 C1067.5 533.5 1081.7 532.5 1090 531 C1098.3 529.5 1109.2 526.0 1113 525" stroke="#f7c9a9" stroke-width="3.6" fill="none" stroke-linecap="round" stroke-linejoin="round" transform="translate(-0.6 -0.8)"/>
<path d="M1058 543 C1062.5 543.2 1076.0 543.3 1085 544 C1094.0 544.7 1107.5 546.5 1112 547" stroke="#f7c9a9" stroke-width="3.6" fill="none" stroke-linecap="round" stroke-linejoin="round" transform="translate(-0.6 -0.8)"/>
<path d="M1054 548 C1052.8 550.2 1050.5 556.3 1047 561 C1043.5 565.7 1038.3 570.3 1033 576 C1027.7 581.7 1018.0 591.8 1015 595" stroke="#f7c9a9" stroke-width="3.6" fill="none" stroke-linecap="round" stroke-linejoin="round" transform="translate(-0.6 -0.8)"/>
<path d="M1029 563 L1031 573" stroke="#f7c9a9" stroke-width="2.6" fill="none" stroke-linecap="round" stroke-linejoin="round" transform="translate(-0.6 -0.8)"/>
<path d="M1050 563 C1055.0 563.0 1068.8 562.2 1080 563 C1091.2 563.8 1104.0 564.8 1117 568 C1130.0 571.2 1145.3 576.2 1158 582 C1170.7 587.8 1183.5 596.3 1193 603 C1202.5 609.7 1211.3 618.8 1215 622" stroke="#f7c9a9" stroke-width="3.8" fill="none" stroke-linecap="round" stroke-linejoin="round" transform="translate(-0.6 -0.8)"/>
<path d="M995 421 C993.7 426.8 989.8 444.0 987 456 C984.2 468.0 979.5 486.8 978 493" stroke="#f7c9a9" stroke-width="2.6" fill="none" stroke-linecap="round" stroke-linejoin="round" transform="translate(-0.6 -0.8)"/>
<path d="M971 457 L968 487" stroke="#f7c9a9" stroke-width="3.3" fill="none" stroke-linecap="round" stroke-linejoin="round" transform="translate(-0.6 -0.8)"/>
<path d="M945 468 C947.0 470.0 953.2 476.3 957 480 C960.8 483.7 966.2 488.3 968 490" stroke="#f7c9a9" stroke-width="3.6" fill="none" stroke-linecap="round" stroke-linejoin="round" transform="translate(-0.6 -0.8)"/>
<path d="M968 487 C969.2 490.0 973.3 499.5 975 505 C976.7 510.5 976.3 513.3 978 520 C979.7 526.7 983.0 538.0 985 545 C987.0 552.0 987.5 555.8 990 562 C992.5 568.2 995.8 576.5 1000 582 C1004.2 587.5 1012.5 592.8 1015 595" stroke="#f7c9a9" stroke-width="3.3" fill="none" stroke-linecap="round" stroke-linejoin="round" transform="translate(-0.6 -0.8)"/>
<path d="M903 504 C905.0 507.0 908.3 516.5 915 522 C921.7 527.5 934.7 532.3 943 537 C951.3 541.7 957.8 546.3 965 550 C972.2 553.7 982.5 557.5 986 559" stroke="#f7c9a9" stroke-width="3.1" fill="none" stroke-linecap="round" stroke-linejoin="round" transform="translate(-0.6 -0.8)"/>
<path d="M941 515 L946 533" stroke="#f7c9a9" stroke-width="3.1" fill="none" stroke-linecap="round" stroke-linejoin="round" transform="translate(-0.6 -0.8)"/>
<path d="M918 570 C923.8 570.0 941.3 571.2 953 570 C964.7 568.8 982.2 564.2 988 563" stroke="#f7c9a9" stroke-width="3.3" fill="none" stroke-linecap="round" stroke-linejoin="round" transform="translate(-0.6 -0.8)"/>
<path d="M923 580 L945 573" stroke="#f7c9a9" stroke-width="3.1" fill="none" stroke-linecap="round" stroke-linejoin="round" transform="translate(-0.6 -0.8)"/>
<path d="M942 558 L944 570" stroke="#f7c9a9" stroke-width="2.8" fill="none" stroke-linecap="round" stroke-linejoin="round" transform="translate(-0.6 -0.8)"/>
<path d="M1015 595 C1014.5 599.2 1013.7 612.2 1012 620 C1010.3 627.8 1008.3 635.3 1005 642 C1001.7 648.7 998.7 655.0 992 660 C985.3 665.0 974.8 668.8 965 672 C955.2 675.2 938.3 677.8 933 679" stroke="#f7c9a9" stroke-width="3.3" fill="none" stroke-linecap="round" stroke-linejoin="round" transform="translate(-0.6 -0.8)"/>
<path d="M933 679 C927.5 678.5 911.0 676.0 900 676 C889.0 676.0 877.0 677.2 867 679 C857.0 680.8 848.7 683.8 840 687 C831.3 690.2 819.2 696.2 815 698" stroke="#f7c9a9" stroke-width="3.3" fill="none" stroke-linecap="round" stroke-linejoin="round" transform="translate(-0.6 -0.8)"/>
<path d="M1005 655 C1007.5 654.3 1015.3 652.7 1020 651 C1024.7 649.3 1030.8 646.0 1033 645" stroke="#d39577" stroke-width="3.1" fill="none" stroke-linecap="round" stroke-linejoin="round" transform="translate(-0.6 -0.8)"/>
<path d="M933 679 C930.0 682.5 922.2 691.5 915 700 C907.8 708.5 899.2 719.7 890 730 C880.8 740.3 868.7 752.8 860 762 C851.3 771.2 841.7 781.2 838 785" stroke="#f7c9a9" stroke-width="3.1" fill="none" stroke-linecap="round" stroke-linejoin="round" transform="translate(-0.6 -0.8)"/>
<path d="M872 755 L852 782" stroke="#f7c9a9" stroke-width="2.1" fill="none" stroke-linecap="round" stroke-linejoin="round" transform="translate(-0.6 -0.8)"/>
<path d="M895 735 L892 745" stroke="#f7c9a9" stroke-width="2.1" fill="none" stroke-linecap="round" stroke-linejoin="round" transform="translate(-0.6 -0.8)"/>
<path d="M992 662 C990.8 666.7 987.8 682.0 985 690 C982.2 698.0 978.0 704.7 975 710 C972.0 715.3 968.3 720.0 967 722" stroke="#f7c9a9" stroke-width="3.1" fill="none" stroke-linecap="round" stroke-linejoin="round" transform="translate(-0.6 -0.8)"/>
<path d="M967 722 C963.7 723.7 952.2 726.5 947 732 C941.8 737.5 938.8 745.3 936 755 C933.2 764.7 931.3 777.2 930 790 C928.7 802.8 928.5 819.8 928 832 C927.5 844.2 927.2 857.8 927 863" stroke="#f7c9a9" stroke-width="3.1" fill="none" stroke-linecap="round" stroke-linejoin="round" transform="translate(-0.6 -0.8)"/>
<path d="M925 780 C924.2 785.0 922.0 800.3 920 810 C918.0 819.7 914.2 833.3 913 838" stroke="#f7c9a9" stroke-width="2.1" fill="none" stroke-linecap="round" stroke-linejoin="round" transform="translate(-0.6 -0.8)"/>
<path d="M967 722 C969.7 723.7 978.0 726.2 983 732 C988.0 737.8 992.0 747.3 997 757 C1002.0 766.7 1008.8 781.2 1013 790 C1017.2 798.8 1020.0 803.8 1022 810 C1024.0 816.2 1024.5 824.2 1025 827" stroke="#f7c9a9" stroke-width="3.1" fill="none" stroke-linecap="round" stroke-linejoin="round" transform="translate(-0.6 -0.8)"/>
<path d="M932 718 L938 735" stroke="#d39577" stroke-width="2.6" fill="none" stroke-linecap="round" stroke-linejoin="round" transform="translate(-0.6 -0.8)"/>
<path d="M900 758 L930 753" stroke="#d39577" stroke-width="2.8" fill="none" stroke-linecap="round" stroke-linejoin="round" transform="translate(-0.6 -0.8)"/>
<path d="M887 780 L920 777" stroke="#d39577" stroke-width="3.1" fill="none" stroke-linecap="round" stroke-linejoin="round" transform="translate(-0.6 -0.8)"/>
<path d="M892 793 L905 783" stroke="#d39577" stroke-width="2.6" fill="none" stroke-linecap="round" stroke-linejoin="round" transform="translate(-0.6 -0.8)"/>
<path d="M946 761 L939 751" stroke="#f7c9a9" stroke-width="2.1" fill="none" stroke-linecap="round" stroke-linejoin="round" transform="translate(-0.6 -0.8)"/>
<path d="M1215 622 C1219.2 622.2 1231.3 623.0 1240 623 C1248.7 623.0 1258.3 622.2 1267 622 C1275.7 621.8 1284.8 621.0 1292 622 C1299.2 623.0 1304.8 625.3 1310 628 C1315.2 630.7 1320.8 636.3 1323 638" stroke="#f7c9a9" stroke-width="3.1" fill="none" stroke-linecap="round" stroke-linejoin="round" transform="translate(-0.6 -0.8)"/>
<path d="M1323 638 C1328.3 637.5 1344.3 635.8 1355 635 C1365.7 634.2 1381.7 633.3 1387 633" stroke="#f7c9a9" stroke-width="2.8" fill="none" stroke-linecap="round" stroke-linejoin="round" transform="translate(-0.6 -0.8)"/>
<path d="M1323 638 C1326.2 643.3 1336.7 660.5 1342 670 C1347.3 679.5 1351.2 686.7 1355 695 C1358.8 703.3 1362.2 711.7 1365 720 C1367.8 728.3 1370.7 739.5 1372 745 C1373.3 750.5 1372.8 751.7 1373 753" stroke="#f7c9a9" stroke-width="2.8" fill="none" stroke-linecap="round" stroke-linejoin="round" transform="translate(-0.6 -0.8)"/>
<path d="M1215 622 C1219.7 624.2 1235.8 629.2 1243 635 C1250.2 640.8 1253.5 649.8 1258 657 C1262.5 664.2 1266.8 672.8 1270 678 C1273.2 683.2 1275.8 686.3 1277 688" stroke="#f7c9a9" stroke-width="3.1" fill="none" stroke-linecap="round" stroke-linejoin="round" transform="translate(-0.6 -0.8)"/>
<path d="M1277 688 C1283.7 691.3 1304.8 701.5 1317 708 C1329.2 714.5 1340.3 721.7 1350 727 C1359.7 732.3 1370.8 737.8 1375 740" stroke="#f7c9a9" stroke-width="3.1" fill="none" stroke-linecap="round" stroke-linejoin="round" transform="translate(-0.6 -0.8)"/>
<path d="M1375 740 C1380.8 739.7 1398.3 738.3 1410 738 C1421.7 737.7 1439.2 738.0 1445 738" stroke="#f7c9a9" stroke-width="2.8" fill="none" stroke-linecap="round" stroke-linejoin="round" transform="translate(-0.6 -0.8)"/>
<path d="M1375 740 C1380.0 742.8 1395.3 751.2 1405 757 C1414.7 762.8 1428.3 772.0 1433 775" stroke="#f7c9a9" stroke-width="2.8" fill="none" stroke-linecap="round" stroke-linejoin="round" transform="translate(-0.6 -0.8)"/>
<path d="M1385 748 L1412 773" stroke="#f7c9a9" stroke-width="2.1" fill="none" stroke-linecap="round" stroke-linejoin="round" transform="translate(-0.6 -0.8)"/>
<path d="M1277 688 C1277.0 691.2 1274.8 701.7 1277 707 C1279.2 712.3 1283.3 716.2 1290 720 C1296.7 723.8 1308.7 728.2 1317 730 C1325.3 731.8 1333.2 730.2 1340 731 C1346.8 731.8 1352.2 733.5 1358 735 C1363.8 736.5 1372.2 739.2 1375 740" stroke="#f7c9a9" stroke-width="2.8" fill="none" stroke-linecap="round" stroke-linejoin="round" transform="translate(-0.6 -0.8)"/>
<path d="M1317 730 C1319.2 734.5 1325.8 748.7 1330 757 C1334.2 765.3 1338.7 772.3 1342 780 C1345.3 787.7 1344.8 795.5 1350 803 C1355.2 810.5 1369.2 821.3 1373 825" stroke="#f7c9a9" stroke-width="2.6" fill="none" stroke-linecap="round" stroke-linejoin="round" transform="translate(-0.6 -0.8)"/>
<path d="M1340 731 C1341.7 734.7 1347.2 745.3 1350 753 C1352.8 760.7 1355.8 773.0 1357 777" stroke="#f7c9a9" stroke-width="2.6" fill="none" stroke-linecap="round" stroke-linejoin="round" transform="translate(-0.6 -0.8)"/>
<path d="M1357 777 C1360.0 779.5 1369.2 786.0 1375 792 C1380.8 798.0 1389.2 809.5 1392 813" stroke="#f7c9a9" stroke-width="2.8" fill="none" stroke-linecap="round" stroke-linejoin="round" transform="translate(-0.6 -0.8)"/>
<path d="M1357 777 C1355.3 781.2 1349.3 794.8 1347 802 C1344.7 809.2 1343.7 817.0 1343 820" stroke="#f7c9a9" stroke-width="2.6" fill="none" stroke-linecap="round" stroke-linejoin="round" transform="translate(-0.6 -0.8)"/>
<path d="M1280 727 C1278.7 729.2 1275.0 736.5 1272 740 C1269.0 743.5 1263.7 746.7 1262 748" stroke="#d39577" stroke-width="2.6" fill="none" stroke-linecap="round" stroke-linejoin="round" transform="translate(-0.6 -0.8)"/>
<path d="M1272 740 C1275.0 740.8 1286.2 741.7 1290 745 C1293.8 748.3 1294.2 757.5 1295 760" stroke="#d39577" stroke-width="2.6" fill="none" stroke-linecap="round" stroke-linejoin="round" transform="translate(-0.6 -0.8)"/>
<path d="M1266 552 L1266 613" stroke="#f7c9a9" stroke-width="2.1" fill="none" stroke-linecap="round" stroke-linejoin="round" transform="translate(-0.6 -0.8)"/>
<path d="M1323 483 C1322.0 488.0 1318.7 505.2 1317 513 C1315.3 520.8 1313.3 523.8 1313 530 C1312.7 536.2 1315.5 544.2 1315 550 C1314.5 555.8 1312.0 558.8 1310 565 C1308.0 571.2 1308.0 579.0 1303 587 C1298.0 595.0 1286.0 605.3 1280 613 C1274.0 620.7 1269.8 627.2 1267 633 C1264.2 638.8 1263.7 645.5 1263 648" stroke="#f7c9a9" stroke-width="2.8" fill="none" stroke-linecap="round" stroke-linejoin="round" transform="translate(-0.6 -0.8)"/>
<path d="M1306 454 L1323 483" stroke="#f7c9a9" stroke-width="3.1" fill="none" stroke-linecap="round" stroke-linejoin="round" transform="translate(-0.6 -0.8)"/>
<path d="M1353 459 C1350.0 462.0 1340.0 473.0 1335 477 C1330.0 481.0 1325.0 482.0 1323 483" stroke="#f7c9a9" stroke-width="3.1" fill="none" stroke-linecap="round" stroke-linejoin="round" transform="translate(-0.6 -0.8)"/>
<path d="M1293 485 L1310 523" stroke="#f7c9a9" stroke-width="2.8" fill="none" stroke-linecap="round" stroke-linejoin="round" transform="translate(-0.6 -0.8)"/>
<path d="M1360 537 C1356.3 540.3 1344.7 552.8 1338 557 C1331.3 561.2 1323.0 561.2 1320 562" stroke="#d39577" stroke-width="2.8" fill="none" stroke-linecap="round" stroke-linejoin="round" transform="translate(-0.6 -0.8)"/>
<path d="M1322 560 L1327 587" stroke="#f7c9a9" stroke-width="2.6" fill="none" stroke-linecap="round" stroke-linejoin="round" transform="translate(-0.6 -0.8)"/>
<path d="M1323 573 C1324.2 576.7 1327.7 587.2 1330 595 C1332.3 602.8 1335.8 615.8 1337 620" stroke="#d39577" stroke-width="2.6" fill="none" stroke-linecap="round" stroke-linejoin="round" transform="translate(-0.6 -0.8)"/>
<path d="M1299 595 C1304.8 595.5 1323.5 598.5 1334 598 C1344.5 597.5 1352.3 594.3 1362 592 C1371.7 589.7 1387.0 585.3 1392 584" stroke="#f7c9a9" stroke-width="3.3" fill="none" stroke-linecap="round" stroke-linejoin="round" transform="translate(-0.6 -0.8)"/>
<path d="M1334 598 C1341.7 600.3 1363.2 607.2 1380 612 C1396.8 616.8 1425.8 624.5 1435 627" stroke="#f7c9a9" stroke-width="3.3" fill="none" stroke-linecap="round" stroke-linejoin="round" transform="translate(-0.6 -0.8)"/>
<path d="M1128 322 Q1127 350 1124 382" stroke="#1f3a40" stroke-width="3.500" fill="none" stroke-linecap="round"/>
<ellipse cx="1099" cy="402" rx="11" ry="15" fill="#eaa888" stroke="#a9644a" stroke-width="1.200" transform="rotate(12 1099 402)"/>
<ellipse cx="1097" cy="398" rx="5" ry="8" fill="#f7caa9" transform="rotate(12 1097 398)"/>
<path d="M1090 412 Q1100 420 1112 414" stroke="#a9644a" stroke-width="1.800" fill="none"/>
<path d="M1094 428 Q1104 424 1112 430 Q1108 442 1098 446 Q1092 438 1094 428 Z" fill="#21414a"/>
<path d="M1113 211 L1123 198" stroke="#0a0ac8" stroke-width="4" stroke-linecap="round"/>
<path d="M1099 440 L1105 432" stroke="#0a0ac0" stroke-width="5" stroke-linecap="round"/>
<path d="M984 732 L994 727" stroke="#1414b0" stroke-width="4" stroke-linecap="round"/>
<circle cx="1001.500" cy="724" r="10" fill="#6a0f14"/><circle cx="1001.500" cy="724" r="7.800" fill="#f20606"/>
<text x="1015" y="706" font-family="Liberation Sans, sans-serif" font-size="17" fill="#8e1226" textLength="55" lengthAdjust="spacingAndGlyphs">Target</text>
<g fill="url(#hum)">
<path d="M749.500 117 Q756 111 762.500 117 L762 127 Q760 133.500 756 134 Q752 133.500 750 127 Z"/>
<path d="M753 132 H759 V139 H753 Z"/>
<path d="M741 141 Q756 135 771 141 L767 158.500 H744 Z"/>
<path d="M747 160 H765 L764 175 H748 Z"/>
<path d="M748 174 H764 Q768 180 767 190 L766 222 L765 250 Q762 255 758 252 L758.500 222 L758 196 L756 189 L754 196 L752.500 222 L752 250 Q748 255 744 251 L743 222 L741.500 190 Q741 180 748 174 Z"/>
<path d="M743 140 L738 146 L722 163 L704 177 L706 180 L725 169 L746 151 Z"/>
<path d="M769 140 L774 147 L789 166 L804 183 L800 185 L784 171 L766 151 Z"/>
</g>
<path d="M745 159 H766" stroke="#2a8f84" stroke-width="1.800"/>
<path d="M755.500 194 V250" stroke="#214048" stroke-width="3"/>
<text x="677" y="1012" class="gtxt" font-size="11.500" textLength="312" lengthAdjust="spacingAndGlyphs">Thorax__1_0__B30f_tubes_centerline_Target_rft_cl.swf</text>
<text x="677" y="1025" class="gtxt" font-size="11.500" textLength="260" lengthAdjust="spacingAndGlyphs">Thorax__1_0__B30f_centerline_AirwaysModel</text>
<text x="1536" y="1023" class="gtxt" font-size="18" textLength="45" lengthAdjust="spacingAndGlyphs">3D-0</text>
</svg><!--V3D-END-->
</div>

<!-- MPR VIEWS -->
<div id="mprframe"></div>
<div class="mpr" id="m1" style="top:93px;height:315px"><!--M1-START--><svg class="abs" style="left:0;top:0" width="312" height="316" viewBox="1604 93 312 316"><defs>
<filter id="b1" x="-20%" y="-20%" width="140%" height="140%"><feGaussianBlur stdDeviation="1.3"/></filter>
<filter id="b2" x="-20%" y="-20%" width="140%" height="140%"><feGaussianBlur stdDeviation="2.2"/></filter>
<filter id="b05" x="-20%" y="-20%" width="140%" height="140%"><feGaussianBlur stdDeviation="0.7"/></filter>
<linearGradient id="blk" x1="0" y1="0" x2="0" y2="1"><stop offset="0" stop-color="#e0e0e0"/><stop offset=".5" stop-color="#e9e9e9"/><stop offset="1" stop-color="#e2e2e2"/></linearGradient>
</defs><circle cx="1656" cy="236" r="50" fill="#222220"/><ellipse cx="1655" cy="236" rx="55" ry="58" fill="none" stroke="#f6f6f6" stroke-width="10" filter="url(#b1)"/><path d="M1612 262 Q1620 276 1634 282" stroke="#dcdcdc" stroke-width="2.500" fill="none" filter="url(#b05)" stroke-linecap="round"/><path d="M1652 284 Q1668 283 1680 276" stroke="#dcdcdc" stroke-width="2.500" fill="none" filter="url(#b05)" stroke-linecap="round"/><path d="M1690 266 Q1695 257 1696 247" stroke="#cfcfcf" stroke-width="2.200" fill="none" filter="url(#b05)" stroke-linecap="round"/><text transform="translate(1757 120) scale(1.0 1)" font-family="Liberation Sans, sans-serif" font-size="27" fill="#cfccbf" stroke="#cfccbf" stroke-width=".4" text-anchor="middle" filter="url(#b05)">A</text><text transform="translate(1606 260) scale(0.8 1)" font-family="Liberation Sans, sans-serif" font-size="27" fill="#cfccbf" stroke="#cfccbf" stroke-width=".4" text-anchor="start" filter="url(#b05)">L</text><text transform="translate(1894 260) scale(0.7 1)" font-family="Liberation Sans, sans-serif" font-size="27" fill="#cfccbf" stroke="#cfccbf" stroke-width=".4" text-anchor="start" filter="url(#b05)">R</text><text transform="translate(1757 395) scale(1.0 1)" font-family="Liberation Sans, sans-serif" font-size="27" fill="#cfccbf" stroke="#cfccbf" stroke-width=".4" text-anchor="middle" filter="url(#b05)">P</text><g filter="url(#b05)"><text x="1607" y="377" class="gtxt" font-size="12.5" textLength="108" lengthAdjust="spacingAndGlyphs">Thorax__1_0__B30f</text><text x="1607" y="390" class="gtxt" font-size="12.5" textLength="305" lengthAdjust="spacingAndGlyphs">Thorax__1_0__B30f_tubes_centerline_Target_rft_cl.swf</text><text x="1607" y="403" class="gtxt" font-size="12.5" textLength="128" lengthAdjust="spacingAndGlyphs">Thorax__1_0__B30f_cpr</text><text x="1878" y="400" class="gtxt" font-size="21" fill="#2fd645">3-1</text></g></svg><!--M1-END--></div>
<div class="mpr" id="m2" style="top:413px;height:314px"><!--M2-START--><svg class="abs" style="left:0;top:0" width="312" height="318" viewBox="1604 413 312 318"><path d="M1737 592 Q1738 582 1750 582 L1838 581 Q1851 581 1851 594 L1852 729 L1737 729 Z" fill="url(#blk)" filter="url(#b2)"/><path d="M1703 411 L1714 411 L1722 540 L1732 640 L1742 729 L1729 729 L1718 620 L1709 520 Z" fill="#f2f2f2" filter="url(#b1)"/><rect x="1739" y="600" width="4" height="130" fill="#9a9a9a" filter="url(#b2)"/><path d="M1611 421 V492" stroke="#8e8e8e" stroke-width="1.800"/><path d="M1607 421 L1611 416 L1615 421" stroke="#8e8e8e" stroke-width="1.500" fill="none"/><path d="M1624 423 H1636" stroke="#9a9a9a" stroke-width="2"/><path d="M1642 420 Q1658 423 1672 419" stroke="#f8c9cf" stroke-width="4.500" fill="none" stroke-linecap="round" filter="url(#b05)"/><path d="M1692 418 Q1696 435 1695 456" stroke="#f3dada" stroke-width="4" fill="none" stroke-linecap="round" filter="url(#b05)"/><rect x="1638" y="460" width="31" height="26" rx="6" fill="#f8c9cf" filter="url(#b05)"/><path d="M1661 442 L1682 467" stroke="#1212d8" stroke-width="6.500" stroke-linecap="round" filter="url(#b05)"/><path d="M1653 521 Q1642 532 1647 545 Q1652 554 1662 556 M1672 556 Q1684 552 1683 538 Q1682 530 1676 524" stroke="#cfc8c8" stroke-width="2.400" fill="none" stroke-linecap="round" filter="url(#b05)"/><path d="M1659 518 L1664 517 M1670 519 L1674 521" stroke="#8a8686" stroke-width="2" fill="none"/><path d="M1634 556 H1668 Q1674 556 1674 566 L1674 570 H1652 Q1650 572 1650 586 H1636 Q1629 586 1629 576 V564 Q1629 556 1634 556 Z" fill="#f8c9cf" filter="url(#b05)"/><path d="M1652 571 Q1670 566 1684 574 Q1690 584 1684 594 Q1676 598 1670 600 Q1668 612 1656 614 Q1640 616 1632 610 Q1626 600 1632 592 Q1640 588 1650 588 Q1648 578 1652 571 Z" fill="#242220" stroke="#a8a2a2" stroke-width="1.800" filter="url(#b05)"/><path d="M1650 620 Q1665 616 1684 621 L1690 638 H1642 Q1642 626 1650 620 Z" fill="#f8c9cf" filter="url(#b05)"/><rect x="1684" y="612" width="10" height="25" rx="2" fill="#1010c8" filter="url(#b05)"/><path d="M1636 641 Q1660 637 1696 642 Q1703 652 1700 664 Q1716 668 1716 690 L1716 729 H1607 V690 Q1612 676 1622 672 Q1624 660 1634 656 Q1632 648 1636 641 Z" fill="#262422" stroke="#d8d2d2" stroke-width="2" filter="url(#b05)"/><path d="M1712 672 Q1718 684 1717 696" stroke="#f8c9cf" stroke-width="6" fill="none" filter="url(#b05)"/><path d="M1696 498 L1703 508" stroke="#e8e2e2" stroke-width="3" stroke-linecap="round" filter="url(#b05)"/><path d="M1701 532 L1708 544" stroke="#e8e2e2" stroke-width="3" stroke-linecap="round" filter="url(#b05)"/><path d="M1706 570 L1711 585" stroke="#e8e2e2" stroke-width="3" stroke-linecap="round" filter="url(#b05)"/><path d="M1711 600 L1716 616" stroke="#e8e2e2" stroke-width="3" stroke-linecap="round" filter="url(#b05)"/><path d="M1714 648 L1718 662" stroke="#e8e2e2" stroke-width="3" stroke-linecap="round" filter="url(#b05)"/><path d="M1698 470 L1699 476" stroke="#e8e2e2" stroke-width="3" stroke-linecap="round" filter="url(#b05)"/><path d="M1609 537 Q1606 550 1608 566" stroke="#f8c9cf" stroke-width="4" fill="none" stroke-linecap="round" filter="url(#b05)"/><path d="M1607 622 Q1609 632 1612 640" stroke="#e0dada" stroke-width="3" fill="none" stroke-linecap="round" filter="url(#b05)"/><text transform="translate(1757 440) scale(1.0 1)" font-family="Liberation Sans, sans-serif" font-size="27" fill="#cfccbf" stroke="#cfccbf" stroke-width=".4" text-anchor="middle" filter="url(#b05)">S</text><text transform="translate(1606 578) scale(0.8 1)" font-family="Liberation Sans, sans-serif" font-size="27" fill="#cfccbf" stroke="#cfccbf" stroke-width=".4" text-anchor="start" filter="url(#b05)">L</text><text transform="translate(1894 578) scale(0.7 1)" font-family="Liberation Sans, sans-serif" font-size="27" fill="#cfccbf" stroke="#cfccbf" stroke-width=".4" text-anchor="start" filter="url(#b05)">R</text><g filter="url(#b05)"><text x="1607" y="694" class="gtxt" font-size="12.5" textLength="108" lengthAdjust="spacingAndGlyphs">Thorax__1_0__B30f</text><text x="1607" y="707" class="gtxt" font-size="12.5" textLength="305" lengthAdjust="spacingAndGlyphs">Thorax__1_0__B30f_tubes_centerline_Target_rft_cl.swf</text><text x="1607" y="720" class="gtxt" font-size="12.5" textLength="128" lengthAdjust="spacingAndGlyphs">Thorax__1_0__B30f_cpr</text><text x="1878" y="716" class="gtxt" font-size="21" fill="#2fd645">2-1</text></g></svg><!--M2-END--></div>
<div class="mpr" id="m3" style="top:731px;height:314px"><!--M3-START--><svg class="abs" style="left:0;top:0" width="312" height="318" viewBox="1604 731 312 318"><path d="M1840 932 Q1842 920 1856 919 L1916 918 V1049 H1838 Z" fill="url(#blk)" filter="url(#b2)"/><path d="M1684 731 L1696 731 L1699 850 L1705 950 L1712 1049 L1700 1049 L1694 950 L1688 850 Z" fill="#f3f3f3" filter="url(#b1)"/><path d="M1794 731 L1806 731 L1812 830 L1818 940 L1822 1049 L1810 1049 L1806 940 L1800 830 Z" fill="#f3f3f3" filter="url(#b1)"/><rect x="1825" y="930" width="4" height="120" fill="#6a6a6a" filter="url(#b2)"/><path d="M1604 977 L1695 979 L1702 1049 H1604 Z" fill="#f2f2f2" filter="url(#b1)"/><rect x="1604" y="1013" width="80" height="8" fill="#3a3a36" filter="url(#b1)"/><path d="M1702 776 Q1700 800 1704 826" stroke="#f6c4cc" stroke-width="3" fill="none" stroke-linecap="round" filter="url(#b05)"/><path d="M1706 880 Q1704 900 1708 920 M1709 930 Q1710 945 1713 955" stroke="#d8c8cc" stroke-width="2.400" fill="none" stroke-linecap="round" filter="url(#b05)"/><rect x="1719" y="780" width="43" height="25" rx="8" fill="none" stroke="#a8a4a0" stroke-width="2" stroke-dasharray="26 4" filter="url(#b05)"/><path d="M1742 846 Q1752 838 1770 842 Q1778 856 1774 868 Q1764 872 1752 869" stroke="#f6c4cc" stroke-width="3.600" fill="none" stroke-linecap="round" filter="url(#b05)"/><path d="M1742 846 Q1732 852 1736 864" stroke="#a8a2a2" stroke-width="2" fill="none" filter="url(#b05)"/><path d="M1734 894 L1744 897 L1748 911 L1736 908 Z" fill="#fbe4e8" stroke="#f6c4cc" stroke-width="2" filter="url(#b05)"/><path d="M1764 888 Q1780 886 1780 900 Q1780 906 1776 908 M1748 920 Q1752 932 1766 932 Q1778 930 1778 920" stroke="#b4aeae" stroke-width="2" fill="none" filter="url(#b05)"/><path d="M1730 962 Q1728 940 1742 938 Q1756 936 1762 946" stroke="#d8d0d0" stroke-width="2.600" fill="none" stroke-linecap="round" filter="url(#b05)"/><path d="M1717 975 Q1714 990 1718 1004" stroke="#f6c4cc" stroke-width="3" fill="none" filter="url(#b05)"/><path d="M1720 992 L1726 988 L1724 998 Z" fill="#fff"/><path d="M1786 980 Q1794 984 1792 998" stroke="#b0aaaa" stroke-width="2" fill="none"/><path d="M1786 992 L1792 990 L1791 1000 Z" fill="#f4eeee"/><path d="M1776 1030 Q1782 1036 1790 1034" stroke="#f6c4cc" stroke-width="4" fill="none" filter="url(#b05)"/><path d="M1787 738 Q1792 760 1791 778 M1790 812 L1794 822 M1794 850 Q1796 880 1800 900" stroke="#d4cccc" stroke-width="2.400" fill="none" stroke-linecap="round" filter="url(#b05)"/><path d="M1786 735 Q1790 750 1790 770" stroke="#f6c4cc" stroke-width="2.500" fill="none" filter="url(#b05)"/><text transform="translate(1757 758) scale(1.0 1)" font-family="Liberation Sans, sans-serif" font-size="27" fill="#cfccbf" stroke="#cfccbf" stroke-width=".4" text-anchor="middle" filter="url(#b05)">S</text><text transform="translate(1606 897) scale(0.9 1)" font-family="Liberation Sans, sans-serif" font-size="27" fill="#cfccbf" stroke="#cfccbf" stroke-width=".4" text-anchor="start" filter="url(#b05)">A</text><text transform="translate(1894 897) scale(0.75 1)" font-family="Liberation Sans, sans-serif" font-size="27" fill="#cfccbf" stroke="#cfccbf" stroke-width=".4" text-anchor="start" filter="url(#b05)">P</text><g filter="url(#b05)"><text x="1607" y="1013" class="gtxt" font-size="12.5" textLength="108" lengthAdjust="spacingAndGlyphs">Thorax__1_0__B30f</text><text x="1607" y="1026" class="gtxt" font-size="12.5" textLength="305" lengthAdjust="spacingAndGlyphs">Thorax__1_0__B30f_tubes_centerline_Target_rft_cl.swf</text><text x="1607" y="1039" class="gtxt" font-size="12.5" textLength="128" lengthAdjust="spacingAndGlyphs">Thorax__1_0__B30f_cpr</text><text x="1878" y="1034" class="gtxt" font-size="21" fill="#2fd645"></text></g><rect x="1606" y="1003" width="92" height="40" fill="#b8f5b0" opacity=".55" filter="url(#b2)"/></svg><!--M3-END--></div>

<div class="abs" style="left:1915px;top:93px;width:4px;height:954px;background:#f4f4ee"></div>
<div class="abs" style="left:1600px;top:1045px;width:319px;height:2px;background:#e4e5e3"></div>
<!-- STATUS -->
<div id="status"><div class="abs" style="right:6px;top:12px;font-size:12.5px;color:#55554f">FPS: 30</div></div>

<div class="abs" style="left:1919px;top:48px;width:12px;height:1044px;background:#111"></div>
<div class="abs" style="left:68px;top:1048px;width:584px;height:3px;background:#dadad5"></div>
<!-- LAUNCHER -->
<div id="launcher">
<svg class="abs" style="left:0;top:0" width="65" height="1056" viewBox="0 24 65 1056">
<defs>
<radialGradient id="bfb" cx=".5" cy=".35" r=".75"><stop offset="0" stop-color="#c45cc0"/><stop offset=".55" stop-color="#a02f9c"/><stop offset="1" stop-color="#7c167a"/></radialGradient>
<linearGradient id="tl" x1="0" y1="0" x2="0" y2="1"><stop offset="0" stop-color="#8a3a8c"/><stop offset="1" stop-color="#5e0d5e"/></linearGradient>
<linearGradient id="qtg" x1="0" y1="0" x2="0" y2="1"><stop offset="0" stop-color="#86d25c"/><stop offset="1" stop-color="#55b83a"/></linearGradient>
<linearGradient id="tealg" x1="0" y1="0" x2="1" y2="1"><stop offset="0" stop-color="#52c4ae"/><stop offset="1" stop-color="#2a9c84"/></linearGradient>
<linearGradient id="cab" x1="0" y1="0" x2="0" y2="1"><stop offset="0" stop-color="#d6d6d4"/><stop offset="1" stop-color="#a6a8a6"/></linearGradient>
</defs>
<!-- BFB / Ubuntu -->
<rect x="4" y="29" width="56" height="55" rx="5" fill="#3e0540"/>
<rect x="6" y="31" width="52" height="51" rx="5" fill="url(#bfb)"/>
<circle cx="31" cy="56" r="13.500" fill="#fff"/>
<circle cx="31" cy="56" r="7.800" fill="#5e2a5e"/>
<circle cx="31" cy="56" r="5" fill="#fff"/>
<path d="M31 56 L19 56 M31 56 L37.500 45.500 M31 56 L37.500 66.500" stroke="#fff" stroke-width="0"/>
<path d="M21 56 L27 51 V61 Z" fill="#5e2a5e"/>
<path d="M36.500 47.500 L39 54.500 L31.500 51 Z" fill="#5e2a5e"/>
<path d="M36.500 64.500 L39 57.500 L31.500 61 Z" fill="#5e2a5e"/>
<circle cx="31" cy="56" r="4.600" fill="#fff"/>
<!-- Files -->
<rect x="5" y="88" width="53" height="53" rx="6" fill="url(#tl)" opacity=".55"/>
<rect x="11" y="94" width="41" height="40" rx="3" fill="url(#cab)" stroke="#8d8f8e"/>
<rect x="12" y="95" width="39" height="5" fill="#f1f1ef"/>
<rect x="13" y="100" width="37" height="7" fill="#e8a35c"/>
<rect x="13" y="107" width="37" height="3" fill="#c98a4c" opacity=".6"/>
<rect x="27" y="122" width="10" height="3" rx="1" fill="#e2e2e0"/>
<!-- Settings -->
<rect x="5" y="147" width="53" height="54" rx="6" fill="url(#tl)" opacity=".75"/>
<g transform="translate(34 174)"><circle r="17" fill="#f4f4f2"/><g fill="#f4f4f2"><rect x="-4.500" y="-22" width="9" height="44" rx="2"/><rect x="-4.500" y="-22" width="9" height="44" rx="2" transform="rotate(45)"/><rect x="-4.500" y="-22" width="9" height="44" rx="2" transform="rotate(90)"/><rect x="-4.500" y="-22" width="9" height="44" rx="2" transform="rotate(135)"/></g><circle r="7" fill="#d8d8d6"/></g>
<path d="M13 194 L31 172" stroke="#c4203a" stroke-width="7" stroke-linecap="round"/>
<circle cx="33" cy="169" r="6.500" fill="#c4203a"/><circle cx="36" cy="166" r="3.200" fill="#f4f4f2"/>
<!-- Terminal -->
<rect x="6" y="207" width="52" height="52" rx="5" fill="#b9a7bd"/>
<rect x="8" y="209" width="48" height="48" rx="4" fill="#d2cfd2"/>
<rect x="12" y="219" width="40" height="30" rx="2" fill="#2b2b27"/>
<rect x="12" y="214" width="40" height="5" fill="#bfbfbb"/>
<path d="M17 224 L23 228.500 L17 233" stroke="#fff" stroke-width="2.600" fill="none"/><rect x="25" y="234" width="8" height="2.600" fill="#fff"/>
<!-- Scanner -->
<rect x="6" y="266" width="52" height="52" rx="5" fill="#a9a2a8"/>
<rect x="8" y="268" width="48" height="48" rx="4" fill="#b9bab4"/>
<path d="M12 300 L20 284 H50 L46 300 Z" fill="#9fa39b"/><path d="M24 280 L50 274 L52 284 L28 290 Z" fill="#c8cbc4"/>
<rect x="11" y="298" width="38" height="13" rx="3" fill="#8b9088"/><rect x="13" y="294" width="24" height="6" rx="3" fill="#f0f2ee"/><rect x="38" y="292" width="8" height="16" fill="#6f756e"/>
<!-- Qt -->
<rect x="6" y="324" width="52" height="53" rx="5" fill="url(#qtg)"/>
<text x="15" y="357" font-family="Liberation Sans, sans-serif" font-weight="bold" font-size="27" fill="#eafcc8" textLength="26" lengthAdjust="spacingAndGlyphs">Qt</text>
<path d="M35 368 Q36 356 50 352 Q49 366 37 369 Z" fill="#d9c8ee"/>
<!-- Active (teal) -->
<rect x="5" y="383" width="54" height="54" rx="5" fill="url(#tealg)"/>
<path d="M31 391 L50 410 L31 429 L12 410 Z" fill="#1b6a58" opacity=".8"/>
<circle cx="31" cy="410" r="15.500" fill="#fff"/><circle cx="31" cy="410" r="10.500" fill="none" stroke="#7fcfbe" stroke-width="2"/><circle cx="31" cy="410" r="6.500" fill="#12604e"/>
<!-- Camera -->
<rect x="5" y="443" width="53" height="52" rx="6" fill="url(#tl)" opacity=".8"/>
<rect x="11" y="455" width="42" height="29" rx="3" fill="#e9e7e6" stroke="#bdb9bb"/>
<circle cx="37" cy="474" r="9.500" fill="#cfcfcd" stroke="#9a9a98"/><circle cx="37" cy="474" r="5.200" fill="#0c0c0c"/>
<rect x="15" y="452" width="9" height="4" fill="#d9d7d6"/>
<!-- Trash -->
<rect x="5" y="1021" width="53" height="53" rx="6" fill="url(#tl)" opacity=".7"/>
<path d="M16 1037 H47 L43 1068 H20 Z" fill="#d8d2d8"/><ellipse cx="31.500" cy="1036" rx="16.500" ry="5.500" fill="#efeaef" stroke="#a9a0aa"/>
<path d="M22 1048 L28 1044 L31 1050 L37 1045 L41 1052 L36 1060 L27 1061 Z" fill="#f8f6f8"/>
<!-- running pips -->
<path d="M0 229 L4 233 L0 237 Z M0 287 L4 291 L0 295 Z M0 347 L4 351 L0 355 Z M0 406 L4 410 L0 414 Z" fill="#f3e6f3"/>
<path d="M64 406 L60 410 L64 414 Z" fill="#f3e6f3"/>
</svg>
</div>

</div>
</body>
</html>
